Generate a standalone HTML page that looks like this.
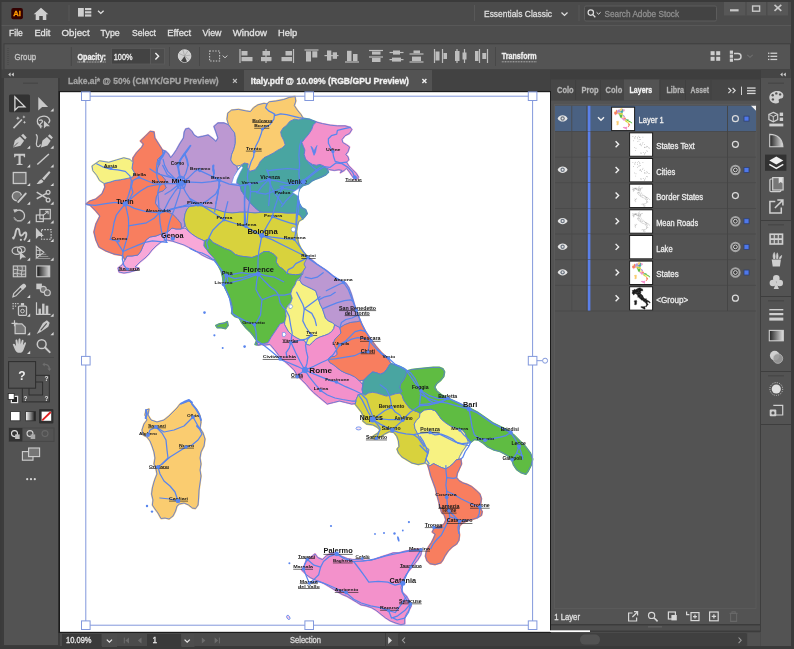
<!DOCTYPE html>
<html><head><meta charset="utf-8"><title>Adobe Illustrator - Italy.pdf</title>
<style>
*{box-sizing:border-box;margin:0;padding:0}
html,body{width:794px;height:649px;overflow:hidden;background:#535353}
#app{position:relative;width:794px;height:649px;overflow:hidden}
svg{position:absolute;left:0;top:0;display:block}
text{font-family:"Liberation Sans",sans-serif;white-space:pre}
</style></head>
<body><div id="app">
<svg id="screen" width="794" height="649" viewBox="0 0 794 649">
<defs><filter id="soft" x="0" y="0" width="794" height="649" filterUnits="userSpaceOnUse"><feGaussianBlur stdDeviation="0.6"/></filter></defs>
<g id="chrome">
<rect x="0" y="0" width="794" height="649" fill="#535353"/>
<rect x="0" y="0" width="794" height="25" fill="#4b4b4b"/>
<rect x="0" y="25" width="794" height="1" fill="#585858"/>
<rect x="0" y="26" width="794" height="18" fill="#4d4d4d"/>
<rect x="0" y="0" width="794" height="2" fill="#3a3a3a"/>
<rect x="0" y="43" width="794" height="27" fill="#4d4d4d"/>
<rect x="3.5" y="43.3" width="787.5" height="26.4" fill="#3e3e3e"/>
<rect x="4.5" y="44.3" width="785.5" height="25" fill="#545454"/>
<rect x="0" y="69.5" width="794" height="8.5" fill="#424242"/>
<rect x="0" y="78" width="60" height="571" fill="#3c3c3c"/>
<rect x="4" y="78" width="54" height="567" fill="#535353"/>
<rect x="60" y="70" width="490" height="22" fill="#424242"/>
<rect x="244" y="70" width="188" height="21.5" fill="#535353"/>
<rect x="550" y="70" width="244" height="579" fill="#3e3e3e"/>
<rect x="551" y="79.5" width="209" height="21" fill="#464646"/>
<rect x="624" y="79.5" width="35.5" height="21" fill="#535353"/>
<rect x="551" y="100.5" width="209" height="524" fill="#535353"/>
<rect x="761" y="78" width="30" height="571" fill="#535353"/>
<rect x="761" y="69.5" width="30" height="8.5" fill="#454545"/>
<rect x="60" y="632" width="701" height="17" fill="#4b4b4b"/>
<rect x="551" y="624" width="209" height="8" fill="#3c3c3c"/>
<rect x="551" y="625.5" width="209" height="5" fill="#4e4e4e"/>
<rect x="0" y="0" width="1.5" height="649" fill="#3a3a3a"/>
<rect x="791" y="0" width="3" height="649" fill="#3a3a3a"/>
<rect x="0" y="646" width="794" height="3" fill="#3a3a3a"/>
<rect x="58.6" y="91" width="492.4" height="542" fill="#1c1c1c"/>
<rect x="60" y="92.2" width="490" height="539.6" fill="#ffffff"/>
<rect x="550" y="630.3" width="40" height="1.7" fill="#ffffff"/>
</g>
<g id="artwork" filter="url(#soft)">
<g id="under" stroke-width="1.8" stroke-linejoin="round">
<polygon fill="#BC98D2" stroke="#BC98D2" points="162.4,150 165.4,151 168.4,154 170.7,157.8 173.7,154 176.7,149.5 179.7,144 183.5,138 184.3,132 185.8,129 188.8,128.3 191.8,131.3 194,135 197.9,137.4 202,136.5 208,135 212,138 216,141.5 218,138 216,132 214,126.5 218,123 224,123 229,125 231.6,129 234.6,132.8 235.3,137.3 235.3,143.4 233.8,149.4 231.6,154.7 230.8,160 233.1,163.8 236.8,166 237.6,170.6 235,176 236.1,182 239.9,185 241.4,191 245.9,197.1 250.5,203.1 255,207.7 259.5,211.4 262.5,212.2 255,213 247.4,212.2 239.9,212.2 232.3,213 224.8,212.2 217.2,209.9 209.6,207.7 203.6,206.2 196,205.4 190,206.2 187,209 185,214 184,220 185,226 181,229 181.6,227.8 180.8,223.2 177,218.6 172.4,214 168.5,212.4 163.1,210.9 158.5,207.8 155.4,203.2 156.2,197 158.5,192.4 163.1,190.8 166.2,187.8 164.7,184.7 165.4,180 161.6,175.4 157,172.4 157.7,167.7 160,163 160,157 163,154"/>
<polygon fill="#D8D23E" stroke="#D8D23E" points="190,206.2 196,205.4 203.6,206.2 209.6,207.7 217.2,209.9 224.8,212.2 232.3,213 239.9,212.2 247.4,212.2 255,213 262.5,212.2 270.1,212.2 277.7,212.2 286.7,213 295.8,213 300.3,215.2 302.6,219 298.8,221.3 297.3,225.8 296.5,231.8 297.3,237.9 298.8,243.9 301,248.5 304.1,253 307.9,256.8 310.5,259.5 308.5,262 305.6,267.4 303.3,271.1 300.3,274.2 295.8,274.9 289.7,274.2 286.7,272.7 283.7,269.6 279.2,266.6 276.1,262.1 276.9,257.5 273.1,253.8 268.6,251.5 264,251.5 258,255.3 252,257.5 245.9,256.8 239.9,256 235.3,254.5 230.8,250.7 224.8,248.5 218.7,245.4 212.7,242.4 209.6,238.6 204.4,240.9 197.6,237.9 193,234.9 189,231.8 185.5,226 184.2,220 185,214 187,209"/>
<polygon fill="#48A5A1" stroke="#48A5A1" points="303.3,118.4 310,119.5 316.3,122.1 313.2,125.1 311.7,129.6 308.7,134.2 304.9,138.7 301.9,142.5 303.4,146.3 304.9,150 304.2,154.6 305.7,159.1 308.7,162.1 312.5,164.4 316.3,165.2 320,164.4 323.8,165.9 326.8,168.2 328.4,172 325.3,175 320.8,177.2 316.3,178.8 311.7,181 308,184 302.7,185.6 299.6,188.6 298,192.6 298,198.6 298.8,203.1 301.8,207.7 305.6,209.9 307.1,213.7 304.5,217 302.6,219 300.3,215.2 295.8,213 286.7,213 277.7,212.2 270.1,212.2 262.5,212.2 259.5,211.4 255,207.7 250.5,203.1 245.9,197.1 241.4,191 239.9,185 236.1,182 235,176 237.6,170.6 241.4,166 244.4,163 248.2,163.8 247.4,167.5 249.7,171.3 255,169.8 262,158 272,150 277,138 276,128 286,120 294.3,117"/>
<polygon fill="#FACC70" stroke="#FACC70" points="227.8,113.1 231.6,110.1 238.4,109.4 245.9,110.9 250.5,111.6 253.5,107.8 258,104.8 264,103.3 267,104 269.3,101.8 276.1,101 283.7,99.5 289.7,97.3 295,96.5 295.8,101 294.3,105.6 297.3,110.1 301,114.6 303.3,118.4 298.8,119.9 294.3,119.2 289.7,121.4 286.7,125.2 282.9,128.2 280.7,132 281.4,135.8 283.7,140.3 285.2,144.9 282.2,147.9 277.7,150.2 273.1,153.2 268.6,155.5 264,157.7 260.3,161.5 258,166 255,169.8 249.7,171.3 247.4,167.5 248.2,163.8 244.4,163 240.6,165.3 236.8,166 233.1,163.8 230.8,160 231.6,154.7 233.8,149.4 235.3,143.4 235.3,137.3 234.6,132.8 231.6,129 228.5,124.5 227,119.2"/>
<polygon fill="#F391CB" stroke="#F391CB" points="316.3,122.1 322.3,123.6 329.9,125.1 337.4,125.9 345,125.9 350.3,127.4 351.8,129.6 349.5,133.4 345,135.7 342,139.5 342.7,142.5 346.5,144.8 349.5,147 348,151.6 345.7,154.6 348,156.8 348.8,159.9 346.5,162.1 348.8,165.9 352.5,169.7 356.3,173.5 358.6,177.2 355.6,179.5 352.5,176.5 349.5,172 346.5,168.2 344.2,170.4 340.4,172.7 342,170.4 338.9,169.7 334.4,170.4 329.9,169.7 326.8,168.2 323.8,165.9 320,164.4 316.3,165.2 312.5,164.4 308.7,162.1 305.7,159.1 304.2,154.6 304.9,150 303.4,146.3 301.9,142.5 304.9,138.7 308.7,134.2 311.7,129.6 313.2,125.1"/>
<polygon fill="#F8A8D8" stroke="#F8A8D8" points="125,260 122,265 118,268 119,272 124,273 130,272 137,270 139,268 135,267 140,262 145,258 149,254 152,250 156,246 161,242 167,240 172,241 178,243 184,245 190,248 196,251 202,255 208,258 213,260 215,258 210,254 207,250 204,246 204.4,240.9 197.6,237.9 193,234.9 189,231.8 185,228 181,229 176,229 172,228 169,231 164,233 161,234 156,236 150,237 146,240 143,246 141,251 138,255 132,256 127,256"/>
<polygon fill="#F87E5E" stroke="#F87E5E" points="132.9,162.3 133,158 136.7,152.5 142,147 143.5,144 140.5,141 145,136.6 150.3,131.3 154,132 154.8,138 158.6,144 162.4,150 163,154 160,157 157,160 160,163 157.7,167.7 157,172.4 161.6,175.4 165.4,180 164.7,184.7 166.2,187.8 163.1,190.8 158.5,192.4 156.2,197 155.4,203.2 158.5,207.8 163.1,210.9 168.5,212.4 172.4,214 177,218.6 180.8,223.2 181.6,227.8 181,229 176,229 172,228 169,231 164,233 161,234 156,236 150,237 146,240 143,246 141,251 138,255 132,256 127,256 125,260 123,256 120,255 114,254 106,251 99,247 96,240 94,232 96,224 100,216 95,210 90,205 86,204 90,201 96,199 102,194 105,187 104.2,183.5 110.2,182 114.8,180.5 120.8,179.7 128.4,178.2 132.9,176.7 134.4,172.9 132,168.4"/>
<polygon fill="#F7F282" stroke="#F7F282" points="92,166 99.6,160.8 108.7,162.3 116.3,160 123.8,157.8 129.9,159.3 132.9,162.3 132,168.4 134.4,172.9 132.9,176.7 128.4,178.2 120.8,179.7 114.8,180.5 110.2,182 104.2,183.5 99.6,180.5 96.6,175.2 92.8,170.6"/>
<polygon fill="#5EBC42" stroke="#5EBC42" points="204.4,240.9 209.6,238.6 212.7,242.4 218.7,245.4 224.8,248.5 230.8,250.7 235.3,254.5 239.9,256 245.9,256.8 252,257.5 258,255.3 264,251.5 268.6,251.5 273.1,253.8 276.9,257.5 276.1,262.1 279.2,266.6 283.7,269.6 286.7,272.7 289.7,274.2 295.8,274.9 300.3,274.2 302.8,274.1 299.7,277.1 296.7,280.1 295.2,284.6 292.2,289.2 290.7,293.7 292.2,298.2 290.7,302.8 287.7,305.8 285.4,310.3 286.1,316.4 284.6,322.4 280.1,323.9 277.1,328.5 274,333 271,337.5 268,342.8 263.5,343.6 258.2,345.1 255.2,344.3 256.7,340.6 253.6,336 249.9,331.5 245.3,327 241.6,322.4 239.3,317.9 234.8,316.4 231.7,313.4 232.5,307.3 231,301.3 228.7,295.2 225.7,289.2 223.4,283.1 222.7,277.1 221.2,271 218.1,265 215,259.5 210,254 207,250 204,246"/>
<polygon fill="#F7F282" stroke="#F7F282" points="299.8,280.2 302.1,284 306.6,286.3 311.2,288.5 315.7,290.8 317.2,295.3 318.7,299.9 320.2,304.4 322.5,308.9 324,313.5 325.5,318 328.5,321 332.3,322.5 334.6,324.8 333.8,328.6 331.6,331.6 328.5,333.9 324.8,335.4 320.2,336.9 315.7,339.2 312.7,342.2 309.6,345.2 306.6,344.5 304.4,340.7 300.6,339.9 296,337.6 291.5,334.6 288,331 284.6,324.7 284.6,322.4 286.1,316.4 285.4,310.3 287.7,305.8 290.7,302.8 292.2,298.2 290.7,293.7 292.2,289.2 295.2,284.6 296.7,280.1"/>
<polygon fill="#BC98D2" stroke="#BC98D2" points="308.1,257.6 312.7,260.6 317.2,264.4 321.7,267.4 326.3,270.4 330.8,274.2 335.3,278 341.4,281 345.9,283.2 348.9,287.8 351.2,293.8 353.5,301.4 355.7,308.9 358,315 360.3,321 356.5,321.8 350.5,322.5 344.4,324.8 339.9,327.8 334.6,324.8 332.3,322.5 328.5,321 325.5,318 324,313.5 322.5,308.9 320.2,304.4 318.7,299.9 317.2,295.3 315.7,290.8 311.2,288.5 306.6,286.3 302.1,284 299.8,280.2 301.3,275.7 302.8,274.1 303.3,271.1 305.6,267.4 304,264 306,260"/>
<polygon fill="#F391CB" stroke="#F391CB" points="256.7,341.5 258.2,345.1 263.5,343.6 268,342.8 271,337.5 274,333 277.1,328.5 280.1,323.9 284.6,322.4 284.6,324.7 288,331 291.5,334.6 296,337.6 300.6,339.9 304.4,340.7 306.6,344.5 309.6,345.2 312.7,342.2 315.7,339.2 320.2,336.9 324.8,335.4 328.5,333.9 331.6,331.6 333.8,328.6 334.6,324.8 339.9,327.8 341,333 338,336 335,339.1 333.5,342.8 335,346.6 336.5,349.6 337.2,354.2 335,356.4 330.4,356.7 328.2,359.5 329.7,362.5 333.5,364.8 337.2,367.8 341,370.8 345.6,373.1 350.1,374.6 354.6,376.8 359.2,380.6 362.8,384.8 362.1,389.3 362.8,393.8 358.3,394.6 356,399.9 355.3,403.5 351.6,404 345.6,402.5 339.5,401 333.5,402.5 327.4,404 322.9,400.3 318.4,396.5 313.8,392.7 310,388.9 306.3,384.4 301.7,379.9 297.2,375.3 294.2,370 289.6,365.5 284.4,361 279.1,355.7 274.5,349.6 270,344.4 263.5,345.1"/>
<polygon fill="#F87E5E" stroke="#F87E5E" points="360.3,321 362.5,325.6 365.2,331 369.7,338 375.8,346 381.8,353 387.9,358.7 390.8,363.6 389.3,365.1 387,368.9 384,372.7 380.2,374.2 376.4,372.7 372.7,371.9 369.6,374.2 366.6,377.2 363.6,380.2 359.2,380.6 354.6,376.8 350.1,374.6 345.6,373.1 341,370.8 337.2,367.8 333.5,364.8 329.7,362.5 328.2,359.5 330.4,356.7 335,356.4 337.2,354.2 336.5,349.6 335,346.6 333.5,342.8 335,339.1 338,336 341,333 339.9,327.8 344.4,324.8 350.5,322.5 356.5,321.8"/>
<polygon fill="#48A5A1" stroke="#48A5A1" points="390.8,363.6 395.3,365.1 399.9,366.6 404.4,368.9 406.7,371.2 405.9,375.7 403.6,380.2 400.6,384 399.9,387.8 402.1,391.6 399.9,393.1 395.3,393.8 390.8,395.3 386.3,396.1 381.7,394.6 377.2,393.1 372.7,392.3 368.1,393.1 365.1,395.3 362.8,393.8 362.1,389.3 362.8,384.8 363.6,380.2 366.6,377.2 369.6,374.2 372.7,371.9 376.4,372.7 380.2,374.2 384,372.7 387,368.9 389.3,365.1"/>
<polygon fill="#D8D23E" stroke="#D8D23E" points="358.3,394.6 362.8,393.8 365.1,395.3 368.1,393.1 372.7,392.3 377.2,393.1 381.7,394.6 386.3,396.1 390.8,395.3 395.3,393.8 399.9,393.1 402.1,395.3 403.6,399.9 406.7,404.4 409.7,408.2 413.5,410.4 418,412 420.3,413.5 419.5,417.3 416.5,420.3 414.2,424 415,428.6 417.3,433.1 419.5,437.7 422.5,442.2 425.6,446.7 429,449.5 428,454 426,459 425,463 418,464.5 412,463 407,460 402,457 398.5,453 397,449 399.1,446.7 398.4,440.7 396.8,436.1 393.8,432.4 389.3,431.6 384.8,433.9 380.2,436.9 375.7,439.2 371.2,437.7 374.2,435.4 378,433.1 380.2,430.1 377.2,427.1 372.7,424.8 366.6,424 362.8,421 363.6,416.5 361.3,412 358.3,408.2 355.3,404.4 356,399.9"/>
<polygon fill="#F7F282" stroke="#F7F282" points="420,413.2 424.5,409.9 430.6,409.2 435.1,410.7 438.1,414.5 441.2,419 445.7,422.8 450.2,425.8 456.3,428.1 462.3,429.6 465.3,433.4 466.8,437.9 468.2,442 465.5,447 462.3,451.5 459.5,456.5 458.5,459.4 456.3,459.8 453.2,463.6 449.5,466.6 445.7,468.9 441.2,467.4 436.6,465.1 433.6,463.6 429.8,465.9 427.6,464.4 425,463 426,459 428,454 429,449.5 425.6,446.7 422.5,442.2 419.5,437.7 417.3,433.1 415,428.6 414.2,424 416.5,420.3 419.5,417.3"/>
<polygon fill="#5EBC42" stroke="#5EBC42" points="406.7,371.2 412,369.6 418,368.9 425.6,368.1 433.1,367.4 439.2,367.4 442.9,368.9 444.5,371.9 443.7,376.4 440.7,380.2 436.9,383.2 434.6,387 436.6,391 441.2,394.8 447.2,397.8 454.8,401.6 462.3,405.4 469.9,408.4 477.4,412.2 485,417.5 492.5,422.8 500.1,426.6 507.7,430.3 513.7,434.9 519.7,440.9 525.8,447 530.3,453 532.6,459.1 531.1,465.1 528.1,471.1 525.8,474.2 521.3,472.7 516.7,469.6 513.7,465.1 512.2,460.6 509.2,456.8 504.6,453.8 500.1,451.5 494.1,450 488,447 483.5,443.2 478.9,440.2 474.4,439.4 470.6,442.4 466.8,437.9 465.3,433.4 462.3,429.6 456.3,428.1 450.2,425.8 445.7,422.8 441.2,419 438.1,414.5 435.1,410.7 430.6,409.2 424.5,409.9 420,413.2 418,412 413.5,410.4 409.7,408.2 406.7,404.4 403.6,399.9 402.1,395.3 399.9,393.1 402.1,391.6 399.9,387.8 400.6,384 403.6,380.2 405.9,375.7"/>
<polygon fill="#F87E5E" stroke="#F87E5E" points="427.6,464.4 429.8,465.9 433.6,463.6 436.6,465.1 441.2,467.4 445.7,468.9 449.5,466.6 453.2,463.6 456.3,459.8 460.8,459.1 461.5,464 458.8,470 457.3,473 456.5,477.6 458.8,480.6 462.5,482.8 467.1,484.4 471.6,486.6 476.1,490.4 479.9,494.2 481.4,498.7 480.7,503.2 479.9,507.8 482.2,511.6 481.4,515.3 477.7,517.6 473.1,519.1 467.1,520.6 462.5,522.9 459.5,525.9 458.8,530.5 459.5,535 458.8,540.3 456.5,544.1 452,547.1 448.2,550.9 445.2,555.4 442.9,559.9 440.6,562.9 435.3,564.5 430,563.7 427,560.7 425.5,556.1 426.3,551.6 428.5,547.1 431.6,542.5 433.8,538 435.3,534.2 432.3,532 433.8,528.9 436.8,527.4 441.4,525.9 444.4,523.6 445.9,519.9 444.4,515.3 441.4,511.6 439.9,506.3 438.4,500.2 436.8,494.2 435.3,488.1 433.1,482.1 430.8,476 429.3,470"/>
<polygon fill="#F391CB" stroke="#F391CB" points="301.7,570 304.6,565.2 306.5,559.6 310.2,557.7 315,553.9 317.8,557.7 322.5,559.6 326.3,555.8 330.1,553.9 334.8,552.9 338.6,554.8 342.3,556.7 347.1,558.6 352.7,559.6 359.4,559.6 365,560.5 370.7,560.5 376.4,558.6 382,556.7 387.7,554.8 393.4,552.9 399,552.9 405.6,551.1 412.3,550.1 417.9,549.2 421.7,550.1 420.8,554.8 417.9,559.6 414.1,564.3 410.4,569 406.6,573.7 403.8,578.5 401.9,583.2 400.9,587.9 402.8,592.6 406.6,596.4 409.4,601.1 411.3,605.8 409.4,609.6 406.6,613.4 404.7,618.1 404.7,623.8 400.9,624.7 395.2,622.8 390.5,621 385.8,618.1 381.1,614.4 376.4,610.6 371.6,607.7 366,605.8 361.2,604.9 356.5,602.1 351.8,599.2 347.1,596.4 342.3,594.5 337.6,591.7 332.9,588.8 328.2,586 323.5,583.2 318.7,581.3 314,579.4 310.2,577.5 306.5,574.7 303.6,571.8"/>
<polygon fill="#FACC70" stroke="#FACC70" points="180,404 184,403 189,401 193,405 197,410 200,416 201,422 200,428 203,433 205,439 204,446 201,452 200,458 201,464 200,470 201,476 200,483 199,490 198.6,498 198,505 195.5,508.5 192.4,508 188.6,505 184,503 179.4,504 177,506 175.5,511 173,516 169,519 165,518 161,518.5 158,513 155,509 152.4,505 153,500 151.6,494 152.4,488 154,482 155,479 157,474 156,469 154,464 155,458 154,452 152,446 150,441 147,437 143,435 142,430 144,424 147,420 145,415 146,410 149,409 148,415 151,420 157,422 164,420 169,416 173,412 177,408"/>
<polygon fill="#5EBC42" stroke="#5EBC42" points="215.9,325.5 219.6,323.9 224.2,323.2 227.2,321.7 228,325.5 225.7,328.5 221.2,327.7 217.4,327.7"/>
</g>
<g id="regions" stroke="#5C7CD4" stroke-width="0.9" stroke-linejoin="round">
<polygon fill="#BC98D2" points="162.4,150 165.4,151 168.4,154 170.7,157.8 173.7,154 176.7,149.5 179.7,144 183.5,138 184.3,132 185.8,129 188.8,128.3 191.8,131.3 194,135 197.9,137.4 202,136.5 208,135 212,138 216,141.5 218,138 216,132 214,126.5 218,123 224,123 229,125 231.6,129 234.6,132.8 235.3,137.3 235.3,143.4 233.8,149.4 231.6,154.7 230.8,160 233.1,163.8 236.8,166 237.6,170.6 235,176 236.1,182 239.9,185 241.4,191 245.9,197.1 250.5,203.1 255,207.7 259.5,211.4 262.5,212.2 255,213 247.4,212.2 239.9,212.2 232.3,213 224.8,212.2 217.2,209.9 209.6,207.7 203.6,206.2 196,205.4 190,206.2 187,209 185,214 184,220 185,226 181,229 181.6,227.8 180.8,223.2 177,218.6 172.4,214 168.5,212.4 163.1,210.9 158.5,207.8 155.4,203.2 156.2,197 158.5,192.4 163.1,190.8 166.2,187.8 164.7,184.7 165.4,180 161.6,175.4 157,172.4 157.7,167.7 160,163 160,157 163,154"/>
<polygon fill="#D8D23E" points="190,206.2 196,205.4 203.6,206.2 209.6,207.7 217.2,209.9 224.8,212.2 232.3,213 239.9,212.2 247.4,212.2 255,213 262.5,212.2 270.1,212.2 277.7,212.2 286.7,213 295.8,213 300.3,215.2 302.6,219 298.8,221.3 297.3,225.8 296.5,231.8 297.3,237.9 298.8,243.9 301,248.5 304.1,253 307.9,256.8 310.5,259.5 308.5,262 305.6,267.4 303.3,271.1 300.3,274.2 295.8,274.9 289.7,274.2 286.7,272.7 283.7,269.6 279.2,266.6 276.1,262.1 276.9,257.5 273.1,253.8 268.6,251.5 264,251.5 258,255.3 252,257.5 245.9,256.8 239.9,256 235.3,254.5 230.8,250.7 224.8,248.5 218.7,245.4 212.7,242.4 209.6,238.6 204.4,240.9 197.6,237.9 193,234.9 189,231.8 185.5,226 184.2,220 185,214 187,209"/>
<polygon fill="#48A5A1" points="303.3,118.4 310,119.5 316.3,122.1 313.2,125.1 311.7,129.6 308.7,134.2 304.9,138.7 301.9,142.5 303.4,146.3 304.9,150 304.2,154.6 305.7,159.1 308.7,162.1 312.5,164.4 316.3,165.2 320,164.4 323.8,165.9 326.8,168.2 328.4,172 325.3,175 320.8,177.2 316.3,178.8 311.7,181 308,184 302.7,185.6 299.6,188.6 298,192.6 298,198.6 298.8,203.1 301.8,207.7 305.6,209.9 307.1,213.7 304.5,217 302.6,219 300.3,215.2 295.8,213 286.7,213 277.7,212.2 270.1,212.2 262.5,212.2 259.5,211.4 255,207.7 250.5,203.1 245.9,197.1 241.4,191 239.9,185 236.1,182 235,176 237.6,170.6 241.4,166 244.4,163 248.2,163.8 247.4,167.5 249.7,171.3 255,169.8 262,158 272,150 277,138 276,128 286,120 294.3,117"/>
<polygon fill="#FACC70" points="227.8,113.1 231.6,110.1 238.4,109.4 245.9,110.9 250.5,111.6 253.5,107.8 258,104.8 264,103.3 267,104 269.3,101.8 276.1,101 283.7,99.5 289.7,97.3 295,96.5 295.8,101 294.3,105.6 297.3,110.1 301,114.6 303.3,118.4 298.8,119.9 294.3,119.2 289.7,121.4 286.7,125.2 282.9,128.2 280.7,132 281.4,135.8 283.7,140.3 285.2,144.9 282.2,147.9 277.7,150.2 273.1,153.2 268.6,155.5 264,157.7 260.3,161.5 258,166 255,169.8 249.7,171.3 247.4,167.5 248.2,163.8 244.4,163 240.6,165.3 236.8,166 233.1,163.8 230.8,160 231.6,154.7 233.8,149.4 235.3,143.4 235.3,137.3 234.6,132.8 231.6,129 228.5,124.5 227,119.2"/>
<polygon fill="#F391CB" points="316.3,122.1 322.3,123.6 329.9,125.1 337.4,125.9 345,125.9 350.3,127.4 351.8,129.6 349.5,133.4 345,135.7 342,139.5 342.7,142.5 346.5,144.8 349.5,147 348,151.6 345.7,154.6 348,156.8 348.8,159.9 346.5,162.1 348.8,165.9 352.5,169.7 356.3,173.5 358.6,177.2 355.6,179.5 352.5,176.5 349.5,172 346.5,168.2 344.2,170.4 340.4,172.7 342,170.4 338.9,169.7 334.4,170.4 329.9,169.7 326.8,168.2 323.8,165.9 320,164.4 316.3,165.2 312.5,164.4 308.7,162.1 305.7,159.1 304.2,154.6 304.9,150 303.4,146.3 301.9,142.5 304.9,138.7 308.7,134.2 311.7,129.6 313.2,125.1"/>
<polygon fill="#F8A8D8" points="125,260 122,265 118,268 119,272 124,273 130,272 137,270 139,268 135,267 140,262 145,258 149,254 152,250 156,246 161,242 167,240 172,241 178,243 184,245 190,248 196,251 202,255 208,258 213,260 215,258 210,254 207,250 204,246 204.4,240.9 197.6,237.9 193,234.9 189,231.8 185,228 181,229 176,229 172,228 169,231 164,233 161,234 156,236 150,237 146,240 143,246 141,251 138,255 132,256 127,256"/>
<polygon fill="#F87E5E" points="132.9,162.3 133,158 136.7,152.5 142,147 143.5,144 140.5,141 145,136.6 150.3,131.3 154,132 154.8,138 158.6,144 162.4,150 163,154 160,157 157,160 160,163 157.7,167.7 157,172.4 161.6,175.4 165.4,180 164.7,184.7 166.2,187.8 163.1,190.8 158.5,192.4 156.2,197 155.4,203.2 158.5,207.8 163.1,210.9 168.5,212.4 172.4,214 177,218.6 180.8,223.2 181.6,227.8 181,229 176,229 172,228 169,231 164,233 161,234 156,236 150,237 146,240 143,246 141,251 138,255 132,256 127,256 125,260 123,256 120,255 114,254 106,251 99,247 96,240 94,232 96,224 100,216 95,210 90,205 86,204 90,201 96,199 102,194 105,187 104.2,183.5 110.2,182 114.8,180.5 120.8,179.7 128.4,178.2 132.9,176.7 134.4,172.9 132,168.4"/>
<polygon fill="#F7F282" points="92,166 99.6,160.8 108.7,162.3 116.3,160 123.8,157.8 129.9,159.3 132.9,162.3 132,168.4 134.4,172.9 132.9,176.7 128.4,178.2 120.8,179.7 114.8,180.5 110.2,182 104.2,183.5 99.6,180.5 96.6,175.2 92.8,170.6"/>
<polygon fill="#5EBC42" points="204.4,240.9 209.6,238.6 212.7,242.4 218.7,245.4 224.8,248.5 230.8,250.7 235.3,254.5 239.9,256 245.9,256.8 252,257.5 258,255.3 264,251.5 268.6,251.5 273.1,253.8 276.9,257.5 276.1,262.1 279.2,266.6 283.7,269.6 286.7,272.7 289.7,274.2 295.8,274.9 300.3,274.2 302.8,274.1 299.7,277.1 296.7,280.1 295.2,284.6 292.2,289.2 290.7,293.7 292.2,298.2 290.7,302.8 287.7,305.8 285.4,310.3 286.1,316.4 284.6,322.4 280.1,323.9 277.1,328.5 274,333 271,337.5 268,342.8 263.5,343.6 258.2,345.1 255.2,344.3 256.7,340.6 253.6,336 249.9,331.5 245.3,327 241.6,322.4 239.3,317.9 234.8,316.4 231.7,313.4 232.5,307.3 231,301.3 228.7,295.2 225.7,289.2 223.4,283.1 222.7,277.1 221.2,271 218.1,265 215,259.5 210,254 207,250 204,246"/>
<polygon fill="#F7F282" points="299.8,280.2 302.1,284 306.6,286.3 311.2,288.5 315.7,290.8 317.2,295.3 318.7,299.9 320.2,304.4 322.5,308.9 324,313.5 325.5,318 328.5,321 332.3,322.5 334.6,324.8 333.8,328.6 331.6,331.6 328.5,333.9 324.8,335.4 320.2,336.9 315.7,339.2 312.7,342.2 309.6,345.2 306.6,344.5 304.4,340.7 300.6,339.9 296,337.6 291.5,334.6 288,331 284.6,324.7 284.6,322.4 286.1,316.4 285.4,310.3 287.7,305.8 290.7,302.8 292.2,298.2 290.7,293.7 292.2,289.2 295.2,284.6 296.7,280.1"/>
<polygon fill="#BC98D2" points="308.1,257.6 312.7,260.6 317.2,264.4 321.7,267.4 326.3,270.4 330.8,274.2 335.3,278 341.4,281 345.9,283.2 348.9,287.8 351.2,293.8 353.5,301.4 355.7,308.9 358,315 360.3,321 356.5,321.8 350.5,322.5 344.4,324.8 339.9,327.8 334.6,324.8 332.3,322.5 328.5,321 325.5,318 324,313.5 322.5,308.9 320.2,304.4 318.7,299.9 317.2,295.3 315.7,290.8 311.2,288.5 306.6,286.3 302.1,284 299.8,280.2 301.3,275.7 302.8,274.1 303.3,271.1 305.6,267.4 304,264 306,260"/>
<polygon fill="#F391CB" points="256.7,341.5 258.2,345.1 263.5,343.6 268,342.8 271,337.5 274,333 277.1,328.5 280.1,323.9 284.6,322.4 284.6,324.7 288,331 291.5,334.6 296,337.6 300.6,339.9 304.4,340.7 306.6,344.5 309.6,345.2 312.7,342.2 315.7,339.2 320.2,336.9 324.8,335.4 328.5,333.9 331.6,331.6 333.8,328.6 334.6,324.8 339.9,327.8 341,333 338,336 335,339.1 333.5,342.8 335,346.6 336.5,349.6 337.2,354.2 335,356.4 330.4,356.7 328.2,359.5 329.7,362.5 333.5,364.8 337.2,367.8 341,370.8 345.6,373.1 350.1,374.6 354.6,376.8 359.2,380.6 362.8,384.8 362.1,389.3 362.8,393.8 358.3,394.6 356,399.9 355.3,403.5 351.6,404 345.6,402.5 339.5,401 333.5,402.5 327.4,404 322.9,400.3 318.4,396.5 313.8,392.7 310,388.9 306.3,384.4 301.7,379.9 297.2,375.3 294.2,370 289.6,365.5 284.4,361 279.1,355.7 274.5,349.6 270,344.4 263.5,345.1"/>
<polygon fill="#F87E5E" points="360.3,321 362.5,325.6 365.2,331 369.7,338 375.8,346 381.8,353 387.9,358.7 390.8,363.6 389.3,365.1 387,368.9 384,372.7 380.2,374.2 376.4,372.7 372.7,371.9 369.6,374.2 366.6,377.2 363.6,380.2 359.2,380.6 354.6,376.8 350.1,374.6 345.6,373.1 341,370.8 337.2,367.8 333.5,364.8 329.7,362.5 328.2,359.5 330.4,356.7 335,356.4 337.2,354.2 336.5,349.6 335,346.6 333.5,342.8 335,339.1 338,336 341,333 339.9,327.8 344.4,324.8 350.5,322.5 356.5,321.8"/>
<polygon fill="#48A5A1" points="390.8,363.6 395.3,365.1 399.9,366.6 404.4,368.9 406.7,371.2 405.9,375.7 403.6,380.2 400.6,384 399.9,387.8 402.1,391.6 399.9,393.1 395.3,393.8 390.8,395.3 386.3,396.1 381.7,394.6 377.2,393.1 372.7,392.3 368.1,393.1 365.1,395.3 362.8,393.8 362.1,389.3 362.8,384.8 363.6,380.2 366.6,377.2 369.6,374.2 372.7,371.9 376.4,372.7 380.2,374.2 384,372.7 387,368.9 389.3,365.1"/>
<polygon fill="#D8D23E" points="358.3,394.6 362.8,393.8 365.1,395.3 368.1,393.1 372.7,392.3 377.2,393.1 381.7,394.6 386.3,396.1 390.8,395.3 395.3,393.8 399.9,393.1 402.1,395.3 403.6,399.9 406.7,404.4 409.7,408.2 413.5,410.4 418,412 420.3,413.5 419.5,417.3 416.5,420.3 414.2,424 415,428.6 417.3,433.1 419.5,437.7 422.5,442.2 425.6,446.7 429,449.5 428,454 426,459 425,463 418,464.5 412,463 407,460 402,457 398.5,453 397,449 399.1,446.7 398.4,440.7 396.8,436.1 393.8,432.4 389.3,431.6 384.8,433.9 380.2,436.9 375.7,439.2 371.2,437.7 374.2,435.4 378,433.1 380.2,430.1 377.2,427.1 372.7,424.8 366.6,424 362.8,421 363.6,416.5 361.3,412 358.3,408.2 355.3,404.4 356,399.9"/>
<polygon fill="#F7F282" points="420,413.2 424.5,409.9 430.6,409.2 435.1,410.7 438.1,414.5 441.2,419 445.7,422.8 450.2,425.8 456.3,428.1 462.3,429.6 465.3,433.4 466.8,437.9 468.2,442 465.5,447 462.3,451.5 459.5,456.5 458.5,459.4 456.3,459.8 453.2,463.6 449.5,466.6 445.7,468.9 441.2,467.4 436.6,465.1 433.6,463.6 429.8,465.9 427.6,464.4 425,463 426,459 428,454 429,449.5 425.6,446.7 422.5,442.2 419.5,437.7 417.3,433.1 415,428.6 414.2,424 416.5,420.3 419.5,417.3"/>
<polygon fill="#5EBC42" points="406.7,371.2 412,369.6 418,368.9 425.6,368.1 433.1,367.4 439.2,367.4 442.9,368.9 444.5,371.9 443.7,376.4 440.7,380.2 436.9,383.2 434.6,387 436.6,391 441.2,394.8 447.2,397.8 454.8,401.6 462.3,405.4 469.9,408.4 477.4,412.2 485,417.5 492.5,422.8 500.1,426.6 507.7,430.3 513.7,434.9 519.7,440.9 525.8,447 530.3,453 532.6,459.1 531.1,465.1 528.1,471.1 525.8,474.2 521.3,472.7 516.7,469.6 513.7,465.1 512.2,460.6 509.2,456.8 504.6,453.8 500.1,451.5 494.1,450 488,447 483.5,443.2 478.9,440.2 474.4,439.4 470.6,442.4 466.8,437.9 465.3,433.4 462.3,429.6 456.3,428.1 450.2,425.8 445.7,422.8 441.2,419 438.1,414.5 435.1,410.7 430.6,409.2 424.5,409.9 420,413.2 418,412 413.5,410.4 409.7,408.2 406.7,404.4 403.6,399.9 402.1,395.3 399.9,393.1 402.1,391.6 399.9,387.8 400.6,384 403.6,380.2 405.9,375.7"/>
<polygon fill="#F87E5E" points="427.6,464.4 429.8,465.9 433.6,463.6 436.6,465.1 441.2,467.4 445.7,468.9 449.5,466.6 453.2,463.6 456.3,459.8 460.8,459.1 461.5,464 458.8,470 457.3,473 456.5,477.6 458.8,480.6 462.5,482.8 467.1,484.4 471.6,486.6 476.1,490.4 479.9,494.2 481.4,498.7 480.7,503.2 479.9,507.8 482.2,511.6 481.4,515.3 477.7,517.6 473.1,519.1 467.1,520.6 462.5,522.9 459.5,525.9 458.8,530.5 459.5,535 458.8,540.3 456.5,544.1 452,547.1 448.2,550.9 445.2,555.4 442.9,559.9 440.6,562.9 435.3,564.5 430,563.7 427,560.7 425.5,556.1 426.3,551.6 428.5,547.1 431.6,542.5 433.8,538 435.3,534.2 432.3,532 433.8,528.9 436.8,527.4 441.4,525.9 444.4,523.6 445.9,519.9 444.4,515.3 441.4,511.6 439.9,506.3 438.4,500.2 436.8,494.2 435.3,488.1 433.1,482.1 430.8,476 429.3,470"/>
<polygon fill="#F391CB" points="301.7,570 304.6,565.2 306.5,559.6 310.2,557.7 315,553.9 317.8,557.7 322.5,559.6 326.3,555.8 330.1,553.9 334.8,552.9 338.6,554.8 342.3,556.7 347.1,558.6 352.7,559.6 359.4,559.6 365,560.5 370.7,560.5 376.4,558.6 382,556.7 387.7,554.8 393.4,552.9 399,552.9 405.6,551.1 412.3,550.1 417.9,549.2 421.7,550.1 420.8,554.8 417.9,559.6 414.1,564.3 410.4,569 406.6,573.7 403.8,578.5 401.9,583.2 400.9,587.9 402.8,592.6 406.6,596.4 409.4,601.1 411.3,605.8 409.4,609.6 406.6,613.4 404.7,618.1 404.7,623.8 400.9,624.7 395.2,622.8 390.5,621 385.8,618.1 381.1,614.4 376.4,610.6 371.6,607.7 366,605.8 361.2,604.9 356.5,602.1 351.8,599.2 347.1,596.4 342.3,594.5 337.6,591.7 332.9,588.8 328.2,586 323.5,583.2 318.7,581.3 314,579.4 310.2,577.5 306.5,574.7 303.6,571.8"/>
<polygon fill="#FACC70" points="180,404 184,403 189,401 193,405 197,410 200,416 201,422 200,428 203,433 205,439 204,446 201,452 200,458 201,464 200,470 201,476 200,483 199,490 198.6,498 198,505 195.5,508.5 192.4,508 188.6,505 184,503 179.4,504 177,506 175.5,511 173,516 169,519 165,518 161,518.5 158,513 155,509 152.4,505 153,500 151.6,494 152.4,488 154,482 155,479 157,474 156,469 154,464 155,458 154,452 152,446 150,441 147,437 143,435 142,430 144,424 147,420 145,415 146,410 149,409 148,415 151,420 157,422 164,420 169,416 173,412 177,408"/>
<polygon fill="#5EBC42" points="215.9,325.5 219.6,323.9 224.2,323.2 227.2,321.7 228,325.5 225.7,328.5 221.2,327.7 217.4,327.7"/>
</g>
<g id="lakes" fill="#fff" stroke="#5885EE" stroke-width="0.6">
<polygon points="231.6,183.5 233.8,176.6 237.6,170.6 241.4,166.0 242.9,167.5 239.6,173.6 237.0,179.6 236.3,184.0"/>
<polygon points="292.0,227.5 294.5,227.0 295.6,229.5 294.5,232.0 292.0,231.6 291.2,229.6"/>
<polygon points="289.0,305.0 291.6,304.6 292.6,306.6 291.2,308.6 289.0,308.2"/>
<polygon points="282.4,332.6 285.0,332.4 286.0,334.6 284.6,336.6 282.4,336.2"/>
</g>
<g id="roads" fill="none" stroke="#5885EE" stroke-width="1.25" stroke-linejoin="round" stroke-linecap="round">
<polyline points="125.3,203.9 114.8,202.4 104.2,203.9 95.1,205.4 86.8,204.6"/>
<polyline points="125.3,203.9 129.9,198.6 132.9,192.5 131.4,186.5 132.9,180.5 138.9,177.4"/>
<polyline points="125.3,203.9 132.9,197.1 140.5,191.0 148.0,186.5 160.1,184.2 170.7,183.5 181.3,183.5"/>
<polyline points="125.3,203.9 134.4,208.4 145.0,211.4 159.3,212.9"/>
<polyline points="125.3,203.9 126.8,210.7 128.4,217.9 128.7,225.8 128.1,234.9 125.3,243.9 123.1,251.5"/>
<polyline points="125.3,203.9 120.8,209.2 116.3,215.2 114.0,222.8 112.5,231.8 110.2,239.4"/>
<polyline points="138.9,177.4 146.5,180.5 154.1,183.5 160.1,184.2"/>
<polyline points="160.1,184.2 157.1,177.4 156.3,169.9 157.1,162.3 161.6,156.3 164.6,151.7"/>
<polyline points="160.1,184.2 157.8,192.5 158.6,201.6 159.3,212.9"/>
<polyline points="181.3,183.5 179.7,174.4 178.2,165.3 180.5,159.3 184.3,154.8 188.8,148.7"/>
<polyline points="181.3,183.5 188.8,177.4 194.9,171.4 200.0,168.4"/>
<polyline points="181.3,183.5 179.7,192.5 176.7,201.6 173.7,210.7 170.7,217.9 168.4,225.8 166.9,234.9 166.1,240.9"/>
<polyline points="181.3,183.5 185.8,192.5 191.8,201.6 197.9,206.1"/>
<polyline points="181.3,183.5 175.2,191.0 169.2,200.1 164.6,209.2 159.3,212.9"/>
<polyline points="181.3,183.5 173.7,177.4 167.7,171.4 164.6,165.3 163.1,159.3"/>
<polyline points="159.3,212.9 170.7,209.2 182.8,206.1 193.3,203.1 200.0,204.6"/>
<polyline points="96.6,163.8 102.7,166.8 110.2,169.1 117.8,169.9 125.3,171.4 129.9,175.9 131.4,180.5 130.6,188.0 128.4,195.6 125.3,203.9"/>
<polyline points="159.3,212.9 160.1,222.8 161.6,231.8 164.6,239.4 166.9,242.4"/>
<polyline points="128.4,225.8 137.4,224.3 146.5,222.8 154.1,218.2 159.3,212.9"/>
<polyline points="123.1,251.5 129.9,248.5 137.4,245.4 145.0,242.4 152.5,240.9 160.1,241.7 166.9,242.4"/>
<polyline points="110.2,239.4 116.3,240.9 123.1,251.5"/>
<polyline points="123.1,251.5 122.3,259.0 123.8,265.1 126.8,268.9"/>
<polyline points="176.7,180.5 178.2,177.4 184.3,178.2 185.8,183.5 184.3,188.0 178.2,188.0 176.7,183.5"/>
<polyline points="267.1,104.1 265.6,107.8 268.6,110.9 273.1,113.1 275.4,115.4 280.7,113.9 286.7,114.6 292.8,116.2 298.8,117.7 303.3,118.4"/>
<polyline points="274.6,113.9 273.9,119.2 270.1,124.5 262.5,129.0 261.0,134.3 258.8,140.3 255.7,146.4 254.2,151.7 253.5,157.0 251.2,161.5 249.7,166.0 248.2,170.6 247.4,176.6 248.2,184.2"/>
<polyline points="199.8,170.6 209.6,175.1 219.5,180.4 229.3,184.2 239.9,185.7 249.7,184.2 259.5,181.9 268.6,179.6 277.7,181.1 286.7,183.4 295.8,181.9 303.3,181.1"/>
<polyline points="212.7,166.0 214.2,170.6 213.4,176.6 219.5,180.4"/>
<polyline points="219.5,180.4 218.7,188.7 217.2,197.8 215.7,203.8"/>
<polyline points="249.7,184.2 250.5,191.7 249.7,200.8 248.2,209.9 247.4,218.9 246.7,226.5"/>
<polyline points="268.6,179.6 271.6,187.2 274.6,193.2 279.2,199.3 282.2,203.8"/>
<polyline points="268.6,179.6 262.5,185.7 258.0,191.7 250.5,191.7"/>
<polyline points="350.3,127.4 343.5,128.9 337.4,130.4 336.7,134.2 331.4,135.7 328.4,138.7 328.4,143.2 330.6,147.8 332.9,152.3 333.6,156.8 335.2,161.4 340.5,162.9 346.5,162.1"/>
<polyline points="303.4,181.8 310.2,176.5 317.8,170.5 323.8,166.7 329.9,167.4 335.9,162.9 342.0,163.6 348.0,167.4 352.5,172.0 354.8,177.3"/>
<polyline points="299.6,182.5 298.9,173.5 299.6,164.4 298.9,155.3 299.6,146.3 301.2,140.2"/>
<polyline points="303.4,181.8 295.1,184.1 286.0,185.6 280.0,186.3"/>
<polyline points="299.6,185.6 295.9,191.6 298.1,197.7 299.6,203.7 301.2,207.9"/>
<polyline points="303.4,181.8 298.1,188.6 292.1,194.6 286.0,200.7 281.5,206.7"/>
<polyline points="317.8,170.5 313.2,167.4 308.7,162.9"/>
<polyline points="190.0,198.6 200.6,204.6 212.7,212.2 224.0,219.8 235.3,223.5 245.9,226.6 253.5,231.1 261.8,235.6 271.6,239.4 283.7,245.5 295.8,251.5 307.9,257.5"/>
<polyline points="261.8,235.6 271.6,237.1 283.7,238.6 294.3,239.4"/>
<polyline points="261.8,235.6 267.1,225.8 272.4,216.7 274.6,207.7 277.7,198.6 282.2,188.0"/>
<polyline points="261.8,235.6 260.3,243.9 258.8,251.5 258.0,260.6 258.0,273.4"/>
<polyline points="245.9,226.6 245.2,215.2 244.4,203.1 244.4,194.1 245.9,185.0"/>
<polyline points="224.0,219.8 218.7,224.3 212.7,230.3 209.6,236.4 206.6,242.4 208.1,248.5"/>
<polyline points="224.0,219.8 224.8,213.7 226.3,207.7 227.8,201.6"/>
<polyline points="272.4,216.7 280.7,219.8 289.7,222.8 295.8,224.3"/>
<polyline points="294.3,239.4 295.8,231.8 296.5,224.3 297.3,216.7 298.8,209.2 298.1,200.1"/>
<polyline points="294.3,239.4 298.8,245.5 303.3,251.5 307.9,257.5"/>
<polyline points="200.6,204.6 208.1,200.1 215.7,194.1 220.2,185.0"/>
<polyline points="307.9,257.5 301.8,260.6 295.8,263.6 292.8,267.4 288.2,269.6 286.7,273.4"/>
<polyline points="258.0,273.4 250.5,274.2 241.4,272.7 233.8,274.2 227.0,275.7"/>
<polyline points="190.0,248.5 196.0,251.5 202.1,253.0 208.1,256.0 214.2,260.6 220.2,268.1 224.8,274.2 227.0,275.7 227.8,281.7"/>
<polyline points="258.0,273.4 265.6,275.7 274.6,277.2 283.7,281.7"/>
<polyline points="282.2,188.0 274.6,191.0 265.6,194.1 256.5,192.6"/>
<polyline points="282.2,188.0 289.7,189.5 295.8,191.0"/>
<polyline points="258.2,274.1 256.7,281.6 255.9,289.2 258.9,295.2 262.0,299.8 261.2,307.3 260.5,314.9 257.4,320.9 254.4,324.7"/>
<polyline points="258.2,274.1 263.5,280.1 269.5,286.2 275.6,290.7 278.6,295.2 280.1,302.8 283.1,307.3 286.1,310.3 289.2,316.4 290.7,325.5 292.2,333.0 290.7,342.8"/>
<polyline points="262.0,299.8 268.0,297.5 274.1,295.2 278.6,295.2 284.6,295.2 290.7,293.7"/>
<polyline points="223.4,284.6 226.4,290.7 229.5,298.2 231.0,305.8 232.5,313.4 237.8,317.1 245.3,320.9 254.4,324.7 255.9,331.5 256.7,340.6 263.5,345.1 271.0,351.1 280.1,358.7"/>
<polyline points="226.4,275.6 234.8,278.6 243.8,277.1 251.4,274.8 258.2,274.1"/>
<polyline points="223.4,284.6 231.7,282.4 240.8,280.1 249.9,277.1 258.2,274.1"/>
<polyline points="296.7,292.2 299.7,298.2 302.8,304.3 304.3,308.8 303.5,314.9 302.8,320.9 305.8,327.0 308.8,331.5 311.8,335.3"/>
<polyline points="304.3,308.8 310.3,304.3 316.4,299.8 320.0,296.7"/>
<polyline points="304.3,308.8 311.8,313.4 314.9,319.4 316.4,325.5"/>
<polyline points="290.7,342.8 298.2,340.6 305.8,339.1 311.8,335.3"/>
<polyline points="290.7,342.8 289.2,348.1 286.1,352.7 286.9,357.2"/>
<polyline points="226.4,275.6 223.4,284.6"/>
<polyline points="308.1,258.3 315.7,263.6 324.8,269.6 333.8,276.4 343.6,282.5 348.2,289.3 350.5,295.3 353.5,302.9 356.5,310.5 358.8,316.5 361.8,324.1 365.6,331.6 371.6,340.7"/>
<polyline points="305.1,277.2 311.2,278.7 317.2,277.2 323.2,272.7"/>
<polyline points="326.3,290.8 332.3,287.8 338.4,284.8 343.6,282.5"/>
<polyline points="318.7,299.9 324.8,296.8 330.8,295.3 335.3,292.3"/>
<polyline points="322.5,308.9 329.3,305.9 336.8,302.9 344.4,300.6 350.5,299.9 353.5,301.4"/>
<polyline points="339.9,327.8 341.4,322.5 345.9,319.5 352.0,318.0 358.0,315.0"/>
<polyline points="339.9,344.5 345.9,340.7 350.5,336.1 355.0,331.6 361.0,330.1 365.6,331.6"/>
<polyline points="304.8,370.0 307.0,363.2 307.8,357.2 306.3,351.2 305.5,345.1 307.8,339.1 310.8,336.0"/>
<polyline points="304.8,370.0 300.2,361.7 295.7,352.7 291.2,342.8"/>
<polyline points="304.8,370.0 297.2,366.3 288.1,362.5 279.8,359.5"/>
<polyline points="304.8,370.0 313.8,366.3 321.4,362.5 328.2,359.5 333.5,354.2 339.5,345.1"/>
<polyline points="328.2,359.5 336.5,358.7 345.6,357.2 354.6,355.7 360.7,352.7 368.2,351.9 369.7,341.3"/>
<polyline points="304.8,370.0 313.8,373.8 322.9,377.6 330.5,380.6 336.5,382.1 345.6,386.7 354.6,390.5 360.7,393.5 366.7,399.5 369.7,408.6 374.3,420.7"/>
<polyline points="304.8,370.0 309.3,376.8 315.3,384.4 320.6,390.5"/>
<polyline points="304.8,370.0 300.2,373.8 297.2,376.8"/>
<polyline points="320.6,390.5 327.4,395.0 335.0,398.0 342.5,399.5 351.6,401.0 356.1,401.0"/>
<polyline points="302.5,370.0 303.2,367.8 305.5,367.3 307.5,368.5 307.8,370.8 306.3,372.6 304.0,372.3 302.5,370.0"/>
<polyline points="369.7,341.3 375.8,348.1 381.8,354.2 387.9,358.7"/>
<polyline points="339.5,345.1 345.6,342.1 351.6,339.1 357.7,337.6 363.7,338.3 369.7,341.3"/>
<polyline points="377.2,350.0 388.5,358.3 395.3,364.4 404.4,368.9 410.5,372.7 415.0,378.7 418.0,384.8 421.0,390.8 428.6,395.3 437.7,398.4 448.2,398.4 458.8,402.9 470.0,408.2"/>
<polyline points="421.0,390.8 420.3,398.4 419.5,405.9 415.0,408.9 410.5,412.0 405.9,416.5 402.9,420.3 395.3,419.5 387.8,419.5 380.2,418.8 372.7,419.5"/>
<polyline points="421.0,390.8 428.6,399.9 434.6,403.6 440.7,402.1 448.2,398.4"/>
<polyline points="419.5,405.9 428.6,405.2 437.7,402.9 443.7,400.6"/>
<polyline points="391.6,407.4 395.3,412.0 399.9,415.0 402.9,420.3"/>
<polyline points="391.6,407.4 384.8,410.5 378.7,415.0 372.7,419.5"/>
<polyline points="358.3,394.6 362.1,399.9 365.1,405.9 368.1,412.0 372.7,419.5"/>
<polyline points="372.7,419.5 380.2,424.1 386.3,427.1 392.3,430.1 398.4,432.4 405.9,433.9 413.5,434.6 418.0,437.7 421.0,442.2 424.1,446.7"/>
<polyline points="413.5,434.6 421.0,433.1 430.1,432.4 437.7,433.1 443.7,436.1 449.7,439.2 455.8,442.2 461.8,443.7 470.0,442.9"/>
<polyline points="372.7,419.5 377.2,424.1 380.2,428.6 378.0,434.6 376.4,438.4"/>
<polyline points="402.9,420.3 396.8,425.6 392.3,430.1"/>
<polyline points="391.6,407.4 390.8,401.4 389.3,395.3 386.3,389.3 380.2,384.8"/>
<polyline points="406.7,371.2 412.0,378.7 416.5,384.8 421.0,390.8"/>
<polyline points="469.1,409.2 470.6,418.2 472.1,427.3 474.4,434.9 478.9,437.9 485.0,440.2"/>
<polyline points="469.1,409.2 477.4,413.0 485.0,418.2 492.5,423.5 500.1,427.3 510.7,432.6"/>
<polyline points="485.0,440.2 492.5,438.6 500.1,437.1 506.1,435.6 510.7,432.6"/>
<polyline points="510.7,432.6 515.2,439.4 519.0,446.2 516.7,453.0 512.2,459.8"/>
<polyline points="519.0,446.2 521.3,453.0 522.8,459.1"/>
<polyline points="516.7,453.0 522.8,456.0"/>
<polyline points="420.0,394.1 429.1,398.6 438.1,401.6 447.2,403.1 457.8,406.2 469.1,409.2"/>
<polyline points="420.0,404.6 427.6,403.9 435.1,402.4 442.7,400.9 447.2,398.6"/>
<polyline points="429.8,432.6 435.1,434.9 441.2,434.1 447.2,436.4 453.2,439.4 457.8,443.2 463.8,444.7 468.4,445.5"/>
<polyline points="420.0,436.4 423.0,440.9 426.0,447.0 427.6,453.0 426.0,459.1 429.1,463.6"/>
<polyline points="420.0,445.5 424.5,450.0 427.6,453.0"/>
<polyline points="470.6,442.4 468.4,447.0 465.3,451.5 462.8,457.2 460.8,459.1"/>
<polyline points="460.0,430.3 463.8,434.9 468.4,439.4 470.6,442.4"/>
<polyline points="445.9,465.5 445.9,470.0 446.7,477.6 445.9,485.1 446.7,491.2 446.7,497.2 447.4,504.8 448.9,510.8 449.7,516.8 447.4,522.9 444.4,528.9 441.4,535.0 436.8,539.5 433.1,544.1 430.8,548.6"/>
<polyline points="446.7,477.6 453.5,478.3 456.5,477.6"/>
<polyline points="446.7,491.2 453.5,494.2 461.0,498.7 468.6,502.5 474.6,505.5 479.9,507.0"/>
<polyline points="448.9,510.8 453.5,515.3 459.5,521.4"/>
<polyline points="479.9,507.0 479.2,513.8 477.7,517.6"/>
<polyline points="449.7,516.8 455.0,518.4 459.5,521.4 465.6,519.9"/>
<polyline points="433.8,527.4 438.4,528.2 442.9,527.4"/>
<polyline points="459.5,521.4 458.0,527.4 458.8,533.5"/>
<polyline points="336.7,553.9 344.2,558.6 353.7,561.5 359.4,569.0 365.0,576.6 368.8,582.2 378.2,581.3 387.7,582.2 395.2,585.1 402.8,583.2"/>
<polyline points="336.7,553.9 329.1,556.7 323.5,561.5 320.6,567.1 318.7,574.7 314.0,579.4 309.3,583.2"/>
<polyline points="320.6,567.1 314.0,565.2 307.4,559.6"/>
<polyline points="307.4,559.6 304.6,564.3 303.6,569.0 306.5,576.6 309.3,583.2"/>
<polyline points="402.8,583.2 401.9,591.7 405.6,598.3 410.4,604.0"/>
<polyline points="410.4,604.0 404.7,610.6 397.1,616.2 391.5,618.1 388.6,610.6"/>
<polyline points="388.6,610.6 380.1,607.7 370.7,605.8 361.2,603.0 353.7,599.2 346.1,592.6"/>
<polyline points="402.8,583.2 406.6,574.7 410.4,567.1 416.0,557.7 420.8,550.1"/>
<polyline points="410.4,604.0 408.5,612.5 404.7,618.1 397.1,620.0 393.4,618.1"/>
<polyline points="346.1,592.6 336.7,588.8 327.2,584.5 318.7,581.3 309.3,583.2"/>
<polyline points="353.7,561.5 363.1,561.1 374.5,559.2 385.8,555.8 397.1,553.5 408.5,551.1 420.8,550.1"/>
<polyline points="406.6,596.4 400.9,604.9 395.2,612.5 388.6,610.6"/>
<polyline points="156.0,427.0 162.0,433.0 166.0,440.0 167.0,450.0 168.0,458.0 162.0,464.0 158.0,467.0 160.0,474.0 164.0,481.0 170.0,486.0 175.0,492.0 178.0,501.0"/>
<polyline points="156.0,427.0 164.0,432.0 174.0,430.0 184.0,426.0 193.0,417.0"/>
<polyline points="193.0,417.0 198.0,426.0 202.0,434.0 198.0,440.0 192.0,445.0 186.0,447.0 178.0,452.0 170.0,457.0 162.0,464.0"/>
<polyline points="156.0,427.0 150.0,430.0 148.0,435.0"/>
<polyline points="178.0,501.0 170.0,499.0 160.0,498.0"/>
<polyline points="150.0,168.9 156.9,173.5 165.0,175.8 173.1,178.1 181.2,181.6"/>
<polyline points="181.2,181.6 190.4,182.2 202.0,182.7 211.2,181.6 219.3,180.4"/>
<polyline points="219.3,180.4 218.7,188.5 217.0,197.8 215.9,204.7 214.7,211.6"/>
<polyline points="181.2,181.6 176.6,186.2 170.8,190.8 165.0,194.3"/>
<polyline points="202.0,204.7 193.9,205.9 184.7,206.4 175.4,208.2 167.3,211.0 160.4,212.8"/>
<polyline points="162.7,165.4 165.0,170.0 167.3,174.7 173.1,178.1"/>
<polyline points="177.7,166.6 178.9,173.5 181.2,181.6"/>
<polyline points="188.1,165.4 185.8,173.5 181.2,181.6"/>
<polyline points="177.1,178.7 178.9,176.7 181.8,176.4 184.4,178.1 185.2,181.0 184.4,184.1 181.8,185.6 178.9,185.1 177.1,182.7 177.1,178.7"/>
<polyline points="270.4,178.9 268.1,173.1 267.0,169.6"/>
<polyline points="270.4,180.0 269.9,189.3 269.3,198.5 268.7,205.5"/>
<polyline points="267.0,170.8 276.2,169.6 287.8,168.5 299.3,169.6"/>
<polyline points="245.0,184.7 245.0,196.2 244.4,207.8 244.4,225.0"/>
<polyline points="298.2,198.5 297.0,207.8 296.4,214.7 295.9,225.0"/>
<polyline points="299.3,183.5 308.6,176.6 320.0,167.3"/>
</g>
<g id="lakesblue" fill="none" stroke="#5885EE" stroke-width="1.9" stroke-linejoin="round" stroke-linecap="round">
<polyline points="190.4,145.8 187.0,150.4 183.5,155.0 180.6,159.6 178.9,163.1 177.7,166.6"/>
<polyline points="184.7,153.9 187.0,159.6 188.1,165.4"/>
<polyline points="165.0,151.6 162.7,156.2 159.2,160.8 158.1,164.3"/>
<polyline points="213.5,165.4 213.0,170.0 214.1,173.5"/>
<polyline points="181.0,403.6 184.0,402.0 189.0,400.0 192.0,402.4"/>
<polyline points="192.0,404.0 196.0,409.0 199.0,414.0 201.0,420.0"/>
<polyline points="146.0,410.0 147.0,414.0 145.6,418.0"/>
<polyline points="197.0,426.0 200.0,429.0"/>
</g>
<polygon points="292.4,192.5 299.3,188.1 298.2,196.2" fill="#fff" stroke="#5885EE" stroke-width="0.5"/>

<g id="labels" fill="#151515">
<text x="104" y="166.79" font-size="4.14" font-weight="bold" textLength="13" lengthAdjust="spacingAndGlyphs">Aosta</text>
<rect x="104" y="167.37" width="13" height="0.6"/>
<text x="133" y="176.49" font-size="4.14" font-weight="bold" textLength="13" lengthAdjust="spacingAndGlyphs">Biella</text>
<text x="151.8" y="183.19" font-size="4.14" font-weight="bold" textLength="16.6" lengthAdjust="spacingAndGlyphs">Novara</text>
<text x="171.4" y="182.689" font-size="6.08" font-weight="bold" textLength="18.9" lengthAdjust="spacingAndGlyphs">Milan</text>
<text x="170.7" y="164.814" font-size="5.04" font-weight="bold" textLength="13.6" lengthAdjust="spacingAndGlyphs">Como</text>
<text x="116.3" y="203.604" font-size="6.4" font-weight="bold" textLength="17.3" lengthAdjust="spacingAndGlyphs">Turin</text>
<text x="145.7" y="212.126" font-size="3.96" font-weight="bold" textLength="25" lengthAdjust="spacingAndGlyphs">Alessandria</text>
<text x="252.3" y="121.555" font-size="4.32" font-weight="bold" textLength="20.1" lengthAdjust="spacingAndGlyphs">Bolzano</text>
<rect x="252.3" y="122.16" width="20.1" height="0.6"/>
<text x="254.2" y="127.255" font-size="4.32" font-weight="bold" textLength="15.1" lengthAdjust="spacingAndGlyphs">Bozen</text>
<rect x="254.2" y="127.86" width="15.1" height="0.6"/>
<text x="245.9" y="150.155" font-size="4.32" font-weight="bold" textLength="15.9" lengthAdjust="spacingAndGlyphs">Trento</text>
<rect x="245.9" y="150.76" width="15.9" height="0.6"/>
<text x="190" y="170.155" font-size="4.32" font-weight="bold" textLength="20.4" lengthAdjust="spacingAndGlyphs">Bergamo</text>
<text x="211" y="178.826" font-size="3.96" font-weight="bold" textLength="18.6" lengthAdjust="spacingAndGlyphs">Brescia</text>
<text x="241.4" y="184.126" font-size="3.96" font-weight="bold" textLength="16.6" lengthAdjust="spacingAndGlyphs">Verona</text>
<text x="260.3" y="178.879" font-size="5.22" font-weight="bold" textLength="19.7" lengthAdjust="spacingAndGlyphs">Vicenza</text>
<text x="287.5" y="183.704" font-size="6.4" font-weight="bold" textLength="19.5" lengthAdjust="spacingAndGlyphs">Venice</text>
<text x="326" y="151.09" font-size="4.14" font-weight="bold" textLength="14.5" lengthAdjust="spacingAndGlyphs">Udine</text>
<text x="345.3" y="180.755" font-size="4.32" font-weight="bold" textLength="16.7" lengthAdjust="spacingAndGlyphs">Trieste</text>
<rect x="345.3" y="181.36" width="16.7" height="0.6"/>
<text x="187" y="204.49" font-size="4.14" font-weight="bold" textLength="25.7" lengthAdjust="spacingAndGlyphs">Piacenza</text>
<text x="216.4" y="218.99" font-size="4.14" font-weight="bold" textLength="15.9" lengthAdjust="spacingAndGlyphs">Parma</text>
<text x="236.8" y="225.555" font-size="4.32" font-weight="bold" textLength="19.7" lengthAdjust="spacingAndGlyphs">Modena</text>
<text x="247.4" y="234.219" font-size="6.72" font-weight="bold" textLength="30.3" lengthAdjust="spacingAndGlyphs">Bologna</text>
<text x="264" y="216.755" font-size="4.32" font-weight="bold" textLength="18.2" lengthAdjust="spacingAndGlyphs">Ferrara</text>
<text x="283.7" y="239.155" font-size="4.32" font-weight="bold" textLength="21.9" lengthAdjust="spacingAndGlyphs">Ravenna</text>
<text x="274.6" y="193.855" font-size="4.32" font-weight="bold" textLength="15.9" lengthAdjust="spacingAndGlyphs">Padua</text>
<text x="243" y="272.119" font-size="6.72" font-weight="bold" textLength="31" lengthAdjust="spacingAndGlyphs">Florence</text>
<text x="222" y="275.244" font-size="5.4" font-weight="bold" textLength="10.5" lengthAdjust="spacingAndGlyphs">Pisa</text>
<text x="214.4" y="284.29" font-size="4.14" font-weight="bold" textLength="18.1" lengthAdjust="spacingAndGlyphs">Livorno</text>
<text x="242.3" y="324.255" font-size="4.32" font-weight="bold" textLength="22.7" lengthAdjust="spacingAndGlyphs">Grosseto</text>
<text x="282.6" y="341.755" font-size="4.32" font-weight="bold" textLength="15.4" lengthAdjust="spacingAndGlyphs">Viterbo</text>
<rect x="282.6" y="342.36" width="15.4" height="0.6"/>
<text x="306.2" y="334.455" font-size="4.32" font-weight="bold" textLength="11" lengthAdjust="spacingAndGlyphs">Terni</text>
<rect x="306.2" y="335.06" width="11" height="0.6"/>
<text x="262.7" y="358.355" font-size="4.32" font-weight="bold" textLength="33.3" lengthAdjust="spacingAndGlyphs">Civitavecchia</text>
<rect x="262.7" y="358.96" width="33.3" height="0.6"/>
<text x="301.3" y="257.49" font-size="4.14" font-weight="bold" textLength="14.4" lengthAdjust="spacingAndGlyphs">Rimini</text>
<rect x="301.3" y="258.07" width="14.4" height="0.6"/>
<text x="333.8" y="281.055" font-size="4.32" font-weight="bold" textLength="18.9" lengthAdjust="spacingAndGlyphs">Ancona</text>
<text x="339.1" y="309.82" font-size="4.5" font-weight="bold" textLength="37" lengthAdjust="spacingAndGlyphs">San Benedetto</text>
<rect x="339.1" y="310.45" width="37" height="0.6"/>
<text x="344.7" y="314.82" font-size="4.5" font-weight="bold" textLength="25.1" lengthAdjust="spacingAndGlyphs">del Tronto</text>
<rect x="344.7" y="315.45" width="25.1" height="0.6"/>
<text x="360" y="340.144" font-size="5.4" font-weight="bold" textLength="20.5" lengthAdjust="spacingAndGlyphs">Pescara</text>
<rect x="360" y="340.9" width="20.5" height="0.6"/>
<text x="332.5" y="344.555" font-size="4.32" font-weight="bold" textLength="16.7" lengthAdjust="spacingAndGlyphs">L&#39;Aquila</text>
<text x="360.7" y="352.885" font-size="4.68" font-weight="bold" textLength="14.3" lengthAdjust="spacingAndGlyphs">Chieti</text>
<rect x="360.7" y="353.54" width="14.3" height="0.6"/>
<text x="309.3" y="372.88" font-size="8" font-weight="bold" textLength="22.7" lengthAdjust="spacingAndGlyphs">Rome</text>
<text x="291" y="376.92" font-size="4.5" font-weight="bold" textLength="12" lengthAdjust="spacingAndGlyphs">Ostia</text>
<rect x="291" y="377.55" width="12" height="0.6"/>
<text x="313.8" y="389.755" font-size="4.32" font-weight="bold" textLength="14.4" lengthAdjust="spacingAndGlyphs">Latina</text>
<text x="325.2" y="381.155" font-size="4.32" font-weight="bold" textLength="24.1" lengthAdjust="spacingAndGlyphs">Frosinone</text>
<text x="382.5" y="358.29" font-size="4.14" font-weight="bold" textLength="12.8" lengthAdjust="spacingAndGlyphs">Vasto</text>
<text x="412" y="389.42" font-size="4.5" font-weight="bold" textLength="16.6" lengthAdjust="spacingAndGlyphs">Foggia</text>
<text x="438.2" y="397.82" font-size="4.5" font-weight="bold" textLength="19" lengthAdjust="spacingAndGlyphs">Barletta</text>
<text x="378.7" y="407.52" font-size="4.5" font-weight="bold" textLength="25.7" lengthAdjust="spacingAndGlyphs">Benevento</text>
<text x="394.6" y="420.42" font-size="4.5" font-weight="bold" textLength="18.1" lengthAdjust="spacingAndGlyphs">Avellino</text>
<text x="359.8" y="419.777" font-size="6.88" font-weight="bold" textLength="23" lengthAdjust="spacingAndGlyphs">Naples</text>
<text x="381.7" y="429.938" font-size="5.94" font-weight="bold" textLength="18.9" lengthAdjust="spacingAndGlyphs">Salerno</text>
<text x="365.9" y="439.02" font-size="4.5" font-weight="bold" textLength="21.1" lengthAdjust="spacingAndGlyphs">Sorrento</text>
<rect x="365.9" y="439.65" width="21.1" height="0.6"/>
<text x="420.2" y="431.22" font-size="4.5" font-weight="bold" textLength="19.6" lengthAdjust="spacingAndGlyphs">Potenza</text>
<rect x="420.2" y="431.85" width="19.6" height="0.6"/>
<text x="451.2" y="429.755" font-size="4.32" font-weight="bold" textLength="17" lengthAdjust="spacingAndGlyphs">Matera</text>
<text x="463" y="406.892" font-size="7.2" font-weight="bold" textLength="14.4" lengthAdjust="spacingAndGlyphs">Bari</text>
<text x="500.8" y="431.22" font-size="4.5" font-weight="bold" textLength="18.2" lengthAdjust="spacingAndGlyphs">Brindisi</text>
<text x="511.4" y="445.22" font-size="4.5" font-weight="bold" textLength="14.4" lengthAdjust="spacingAndGlyphs">Lecce</text>
<text x="502.4" y="460.32" font-size="4.5" font-weight="bold" textLength="19.6" lengthAdjust="spacingAndGlyphs">Gallipoli</text>
<text x="475.9" y="439.755" font-size="4.32" font-weight="bold" textLength="18.1" lengthAdjust="spacingAndGlyphs">Taranto</text>
<text x="435.3" y="496.155" font-size="4.32" font-weight="bold" textLength="21.2" lengthAdjust="spacingAndGlyphs">Cosenza</text>
<text x="438.4" y="507.62" font-size="4.5" font-weight="bold" textLength="21.1" lengthAdjust="spacingAndGlyphs">Lamezia</text>
<rect x="438.4" y="508.25" width="21.1" height="0.6"/>
<text x="441.4" y="512.12" font-size="4.5" font-weight="bold" textLength="15.1" lengthAdjust="spacingAndGlyphs">Terme</text>
<rect x="441.4" y="512.75" width="15.1" height="0.6"/>
<text x="470" y="507.185" font-size="4.68" font-weight="bold" textLength="19.7" lengthAdjust="spacingAndGlyphs">Crotone</text>
<rect x="470" y="507.84" width="19.7" height="0.6"/>
<text x="446.7" y="522.414" font-size="5.04" font-weight="bold" textLength="25.7" lengthAdjust="spacingAndGlyphs">Catanzaro</text>
<rect x="446.7" y="523.12" width="25.7" height="0.6"/>
<text x="424.8" y="526.82" font-size="4.5" font-weight="bold" textLength="17.3" lengthAdjust="spacingAndGlyphs">Tropea</text>
<rect x="424.8" y="527.45" width="17.3" height="0.6"/>
<text x="408.9" y="550.155" font-size="4.32" font-weight="bold" textLength="21.1" lengthAdjust="spacingAndGlyphs">Messina</text>
<rect x="408.9" y="550.76" width="21.1" height="0.6"/>
<text x="399.9" y="566.555" font-size="4.32" font-weight="bold" textLength="21.8" lengthAdjust="spacingAndGlyphs">Taormina</text>
<rect x="399.9" y="567.16" width="21.8" height="0.6"/>
<text x="323.5" y="552.977" font-size="6.88" font-weight="bold" textLength="29.2" lengthAdjust="spacingAndGlyphs">Palermo</text>
<rect x="323.5" y="553.94" width="29.2" height="0.6"/>
<text x="298" y="557.755" font-size="4.32" font-weight="bold" textLength="17" lengthAdjust="spacingAndGlyphs">Trapani</text>
<rect x="298" y="558.36" width="17" height="0.6"/>
<text x="293.2" y="568.255" font-size="4.32" font-weight="bold" textLength="19.8" lengthAdjust="spacingAndGlyphs">Marsala</text>
<rect x="293.2" y="568.86" width="19.8" height="0.6"/>
<text x="299.8" y="582.855" font-size="4.32" font-weight="bold" textLength="18" lengthAdjust="spacingAndGlyphs">Mazara</text>
<rect x="299.8" y="583.46" width="18" height="0.6"/>
<text x="298" y="587.555" font-size="4.32" font-weight="bold" textLength="21.7" lengthAdjust="spacingAndGlyphs">del Vallo</text>
<rect x="298" y="588.16" width="21.7" height="0.6"/>
<text x="332.9" y="562.055" font-size="4.32" font-weight="bold" textLength="19.8" lengthAdjust="spacingAndGlyphs">Bagheria</text>
<rect x="332.9" y="562.66" width="19.8" height="0.6"/>
<text x="355.6" y="557.755" font-size="4.32" font-weight="bold" textLength="14.1" lengthAdjust="spacingAndGlyphs">Cefalù</text>
<rect x="355.6" y="558.36" width="14.1" height="0.6"/>
<text x="334.8" y="591.355" font-size="4.32" font-weight="bold" textLength="23.6" lengthAdjust="spacingAndGlyphs">Agrigento</text>
<rect x="334.8" y="591.96" width="23.6" height="0.6"/>
<text x="380.1" y="609.255" font-size="4.32" font-weight="bold" textLength="18.9" lengthAdjust="spacingAndGlyphs">Ragusa</text>
<rect x="380.1" y="609.86" width="18.9" height="0.6"/>
<text x="399" y="602.774" font-size="5.76" font-weight="bold" textLength="22.7" lengthAdjust="spacingAndGlyphs">Syracuse</text>
<rect x="399" y="603.58" width="22.7" height="0.6"/>
<text x="389.6" y="582.592" font-size="7.2" font-weight="bold" textLength="26.4" lengthAdjust="spacingAndGlyphs">Catania</text>
<text x="187" y="416.555" font-size="4.32" font-weight="bold" textLength="12" lengthAdjust="spacingAndGlyphs">Olbia</text>
<text x="148" y="426.955" font-size="4.32" font-weight="bold" textLength="18" lengthAdjust="spacingAndGlyphs">Sassari</text>
<rect x="148" y="427.56" width="18" height="0.6"/>
<text x="139" y="434.555" font-size="4.32" font-weight="bold" textLength="18" lengthAdjust="spacingAndGlyphs">Alghero</text>
<text x="179" y="447.155" font-size="4.32" font-weight="bold" textLength="15" lengthAdjust="spacingAndGlyphs">Nuoro</text>
<rect x="179" y="447.76" width="15" height="0.6"/>
<text x="149" y="467.555" font-size="4.32" font-weight="bold" textLength="20" lengthAdjust="spacingAndGlyphs">Oristano</text>
<rect x="149" y="468.16" width="20" height="0.6"/>
<text x="169" y="500.155" font-size="4.32" font-weight="bold" textLength="19" lengthAdjust="spacingAndGlyphs">Cagliari</text>
<rect x="169" y="500.76" width="19" height="0.6"/>
<text x="161" y="238.419" font-size="6.72" font-weight="bold" textLength="22.6" lengthAdjust="spacingAndGlyphs">Genoa</text>
<text x="118.5" y="269.69" font-size="4.14" font-weight="bold" textLength="21.3" lengthAdjust="spacingAndGlyphs">Savona</text>
<rect x="118.5" y="270.27" width="21.3" height="0.6"/>
<text x="111.4" y="240.49" font-size="4.14" font-weight="bold" textLength="16" lengthAdjust="spacingAndGlyphs">Cuneo</text>
</g>
<g id="cities" fill="#5885EE">
<circle cx="111" cy="168.4" r="1.49"/>
<circle cx="139" cy="177.4" r="1.38"/>
<circle cx="160" cy="184.2" r="1.61"/>
<circle cx="181.3" cy="183.5" r="2.76"/>
<circle cx="178.2" cy="165.3" r="1.61"/>
<circle cx="125.3" cy="203.9" r="2.53"/>
<circle cx="159.3" cy="213" r="1.72"/>
<circle cx="199.8" cy="170.6" r="1.61"/>
<circle cx="219.5" cy="180.4" r="1.72"/>
<circle cx="262.5" cy="129" r="1.61"/>
<circle cx="254.2" cy="151.7" r="1.49"/>
<circle cx="249.7" cy="184.2" r="1.72"/>
<circle cx="268.6" cy="179.6" r="1.84"/>
<circle cx="332.9" cy="151.6" r="1.61"/>
<circle cx="354.8" cy="177.2" r="2.07"/>
<circle cx="303.4" cy="181.8" r="2.53"/>
<circle cx="282.2" cy="188" r="1.84"/>
<circle cx="200.6" cy="204.6" r="1.72"/>
<circle cx="224" cy="219.8" r="1.61"/>
<circle cx="245.9" cy="226.6" r="1.72"/>
<circle cx="261.8" cy="235.6" r="2.53"/>
<circle cx="272.4" cy="216.7" r="1.61"/>
<circle cx="294.3" cy="239.4" r="1.49"/>
<circle cx="307.9" cy="257.5" r="1.72"/>
<circle cx="258.2" cy="274.1" r="2.53"/>
<circle cx="226.4" cy="275.6" r="2.07"/>
<circle cx="223.4" cy="284.6" r="1.72"/>
<circle cx="254.4" cy="324.7" r="1.72"/>
<circle cx="290.7" cy="342.8" r="1.61"/>
<circle cx="311.5" cy="335.3" r="1.61"/>
<circle cx="280" cy="359" r="1.72"/>
<circle cx="343.6" cy="282.5" r="1.72"/>
<circle cx="356.5" cy="310.5" r="1.49"/>
<circle cx="371" cy="341" r="1.84"/>
<circle cx="339.7" cy="344.8" r="1.61"/>
<circle cx="368.2" cy="351.9" r="1.49"/>
<circle cx="304.8" cy="370" r="2.76"/>
<circle cx="297.2" cy="376.8" r="1.72"/>
<circle cx="320.6" cy="390.4" r="1.61"/>
<circle cx="336.5" cy="382.1" r="1.72"/>
<circle cx="388.5" cy="358.3" r="1.49"/>
<circle cx="421" cy="390.8" r="1.84"/>
<circle cx="447.7" cy="398.5" r="1.72"/>
<circle cx="391.6" cy="407.4" r="1.61"/>
<circle cx="402.9" cy="420.3" r="1.61"/>
<circle cx="372.7" cy="419.5" r="2.99"/>
<circle cx="392.3" cy="430.1" r="2.30"/>
<circle cx="376.4" cy="438.4" r="1.61"/>
<circle cx="430" cy="432.5" r="1.72"/>
<circle cx="459.8" cy="430.2" r="1.49"/>
<circle cx="469.1" cy="409.2" r="2.30"/>
<circle cx="510.7" cy="432.6" r="2.07"/>
<circle cx="519" cy="446.2" r="2.07"/>
<circle cx="512.2" cy="459.8" r="1.72"/>
<circle cx="485" cy="440.2" r="1.84"/>
<circle cx="446.7" cy="497.2" r="1.84"/>
<circle cx="448.9" cy="510.8" r="1.72"/>
<circle cx="479.9" cy="507" r="1.84"/>
<circle cx="459.5" cy="521.4" r="1.84"/>
<circle cx="433.8" cy="527.4" r="1.61"/>
<circle cx="421" cy="549.6" r="1.72"/>
<circle cx="410.8" cy="566.9" r="1.49"/>
<circle cx="307.4" cy="559.6" r="1.72"/>
<circle cx="303.6" cy="569" r="1.72"/>
<circle cx="309.3" cy="583.2" r="1.49"/>
<circle cx="336.7" cy="553.9" r="2.30"/>
<circle cx="362.2" cy="558.6" r="1.38"/>
<circle cx="346.1" cy="592.6" r="1.84"/>
<circle cx="388.6" cy="610.6" r="1.72"/>
<circle cx="410.4" cy="604" r="1.84"/>
<circle cx="402.8" cy="583.2" r="2.53"/>
<circle cx="193" cy="417" r="1.84"/>
<circle cx="156" cy="427" r="1.95"/>
<circle cx="148" cy="435" r="1.95"/>
<circle cx="186" cy="447" r="1.72"/>
<circle cx="158" cy="467" r="2.07"/>
<circle cx="178" cy="501" r="2.30"/>
<circle cx="172.8" cy="238.6" r="2.18"/>
<circle cx="127.4" cy="269" r="1.61"/>
<circle cx="118.5" cy="241" r="1.38"/>
<circle cx="204.5" cy="312.6" r="1.3"/>
<circle cx="214.4" cy="335.3" r="1.1"/>
<circle cx="222.7" cy="348.1" r="1"/>
<circle cx="244.6" cy="346.6" r="1.3"/>
<circle cx="331" cy="526" r="1.1"/>
<circle cx="289.4" cy="563.3" r="1"/>
<circle cx="408.9" cy="522.1" r="1.1"/>
<circle cx="394.5" cy="533.5" r="1.2"/>
<circle cx="402.8" cy="530.5" r="0.9"/>
<circle cx="375" cy="534" r="0.9"/>
<circle cx="384" cy="533" r="1"/>
<circle cx="147" cy="506" r="1.2"/>
<circle cx="152" cy="511.6" r="1.2"/>
<ellipse cx="398.3" cy="539" rx="1" ry="2.8" transform="rotate(-15 398.3 539)"/>
<ellipse cx="288.3" cy="617.4" rx="1.4" ry="2.3" transform="rotate(-30 288.3 617.4)" fill="#f8c8e4" stroke="#5885EE" stroke-width="0.8"/>
<ellipse cx="358.6" cy="428.4" rx="2.6" ry="1.5" fill="#fbe3f1" stroke="#5885EE" stroke-width="0.8"/>
<path d="M311 146.3 L312.5 150.8 L314 155.3 L315.5 152.3 L316.3 147.8 L317 145.5 L315 149 L314 152 L312.6 148 Z" stroke="#5885EE" stroke-width="0.8"/>
</g>
</g>
<g id="selection">
<rect x="85.8" y="96.2" width="446.8" height="529.0" fill="none" stroke="#8298dc" stroke-width="1"/>
<rect x="81.5" y="91.9" width="8.6" height="8.6" fill="#fff" stroke="#8298dc" stroke-width="1"/>
<rect x="304.9" y="91.9" width="8.6" height="8.6" fill="#fff" stroke="#8298dc" stroke-width="1"/>
<rect x="528.3" y="91.9" width="8.6" height="8.6" fill="#fff" stroke="#8298dc" stroke-width="1"/>
<rect x="81.5" y="356.4" width="8.6" height="8.6" fill="#fff" stroke="#8298dc" stroke-width="1"/>
<rect x="528.3" y="356.4" width="8.6" height="8.6" fill="#fff" stroke="#8298dc" stroke-width="1"/>
<rect x="81.5" y="620.9" width="8.6" height="8.6" fill="#fff" stroke="#8298dc" stroke-width="1"/>
<rect x="304.9" y="620.9" width="8.6" height="8.6" fill="#fff" stroke="#8298dc" stroke-width="1"/>
<rect x="528.3" y="620.9" width="8.6" height="8.6" fill="#fff" stroke="#8298dc" stroke-width="1"/>
<line x1="536.9" y1="360.70000000000005" x2="542.6" y2="360.70000000000005" stroke="#8298dc" stroke-width="1"/>
<circle cx="545.1" cy="360.70000000000005" r="2.5" fill="#fff" stroke="#8298dc" stroke-width="1"/>
</g>
<g id="ui" opacity="0.999">
<rect x="11.3" y="8" width="11.6" height="11.2" rx="2" fill="#330000"/>
<text x="13.3" y="16.425" font-size="7.5" fill="#ff9a00" stroke="#ff9a00" stroke-width="0.3" font-weight="bold" textLength="7.7" lengthAdjust="spacingAndGlyphs">Ai</text>
<path d="M41 7.8 L48.3 14.2 L46.3 14.2 L46.3 20 L42.8 20 L42.8 16 L39.2 16 L39.2 20 L35.7 20 L35.7 14.2 L33.7 14.2 Z" fill="#d0d0d0"/>
<rect x="68.5" y="5" width="1" height="16" fill="#585858"/>
<rect x="78" y="8" width="5.8" height="8.6" fill="#cfcfcf"/>
<rect x="85" y="8" width="6.3" height="2.2" fill="#cfcfcf"/>
<rect x="85" y="11.2" width="6.3" height="2.2" fill="#cfcfcf"/>
<rect x="85" y="14.4" width="6.3" height="2.2" fill="#cfcfcf"/>
<path d="M98 10.8 L100.8 13.4 L103.6 10.8" fill="none" stroke="#e0e0e0" stroke-width="1.3"/>
<text x="9" y="35.96" font-size="9.6" fill="#e2e2e2" stroke="#e2e2e2" stroke-width="0.3" font-weight="normal" textLength="13.8" lengthAdjust="spacingAndGlyphs">File</text>
<text x="34.4" y="35.96" font-size="9.6" fill="#e2e2e2" stroke="#e2e2e2" stroke-width="0.3" font-weight="normal" textLength="16" lengthAdjust="spacingAndGlyphs">Edit</text>
<text x="61.5" y="35.96" font-size="9.6" fill="#e2e2e2" stroke="#e2e2e2" stroke-width="0.3" font-weight="normal" textLength="28.1" lengthAdjust="spacingAndGlyphs">Object</text>
<text x="100.6" y="35.96" font-size="9.6" fill="#e2e2e2" stroke="#e2e2e2" stroke-width="0.3" font-weight="normal" textLength="19.2" lengthAdjust="spacingAndGlyphs">Type</text>
<text x="132" y="35.96" font-size="9.6" fill="#e2e2e2" stroke="#e2e2e2" stroke-width="0.3" font-weight="normal" textLength="24" lengthAdjust="spacingAndGlyphs">Select</text>
<text x="167.3" y="35.96" font-size="9.6" fill="#e2e2e2" stroke="#e2e2e2" stroke-width="0.3" font-weight="normal" textLength="23.9" lengthAdjust="spacingAndGlyphs">Effect</text>
<text x="202.5" y="35.96" font-size="9.6" fill="#e2e2e2" stroke="#e2e2e2" stroke-width="0.3" font-weight="normal" textLength="19" lengthAdjust="spacingAndGlyphs">View</text>
<text x="232.7" y="35.96" font-size="9.6" fill="#e2e2e2" stroke="#e2e2e2" stroke-width="0.3" font-weight="normal" textLength="34.3" lengthAdjust="spacingAndGlyphs">Window</text>
<text x="278" y="35.96" font-size="9.6" fill="#e2e2e2" stroke="#e2e2e2" stroke-width="0.3" font-weight="normal" textLength="19.2" lengthAdjust="spacingAndGlyphs">Help</text>
<rect x="474" y="5" width="1" height="16" fill="#585858"/>
<text x="484" y="16.555" font-size="9.3" fill="#dedede" stroke="#dedede" stroke-width="0.3" font-weight="normal" textLength="68" lengthAdjust="spacingAndGlyphs">Essentials Classic</text>
<path d="M561.5 12.6 L564.5 15.4 L567.5 12.6" fill="none" stroke="#e0e0e0" stroke-width="1.3"/>
<rect x="578.5" y="5" width="1" height="16" fill="#585858"/>
<rect x="584.5" y="6" width="132" height="15" rx="1.5" fill="#434343" stroke="#5c5c5c" stroke-width="1"/>
<circle cx="590.8" cy="12.6" r="2.7" fill="none" stroke="#ddd" stroke-width="1.2"/><path d="M592.8 14.6 L595.3 17.2" stroke="#ddd" stroke-width="1.3"/>
<path d="M596.6 12.3 L598.6 14.2 L600.6 12.3" fill="none" stroke="#ddd" stroke-width="1"/>
<text x="604.5" y="16.75" font-size="9" fill="#8f8f8f" stroke="#8f8f8f" stroke-width="0.3" font-weight="normal" textLength="74.5" lengthAdjust="spacingAndGlyphs">Search Adobe Stock</text>
<rect x="724" y="2" width="64" height="13.5" fill="#575757"/>
<rect x="745.5" y="2" width="1" height="13.5" fill="#484848"/>
<rect x="766.3" y="2" width="1" height="13.5" fill="#484848"/>
<rect x="730" y="9.2" width="8.6" height="2.2" fill="#c8c8c8"/>
<rect x="752.6" y="6" width="7" height="5.2" fill="none" stroke="#c8c8c8" stroke-width="1.4"/>
<path d="M774.5 4.8 L781.3 10.8 M781.3 4.8 L774.5 10.8" stroke="#c8c8c8" stroke-width="1.6" fill="none"/>
<path d="M8 48 V65" stroke="#444" stroke-width="1" stroke-dasharray="1 1"/>
<text x="14.5" y="60.305" font-size="8.3" fill="#c8c8c8" stroke="#c8c8c8" stroke-width="0.3" font-weight="normal" textLength="21.5" lengthAdjust="spacingAndGlyphs">Group</text>
<rect x="70.8" y="47" width="1" height="19" fill="#484848"/>
<text x="77.5" y="59.505" font-size="8.3" fill="#f0f0f0" stroke="#f0f0f0" stroke-width="0.3" font-weight="bold" textLength="28.5" lengthAdjust="spacingAndGlyphs">Opacity:</text>
<path d="M77.5 62 H106" stroke="#cfcfcf" stroke-width="0.8" stroke-dasharray="1 0.6"/>
<rect x="111.5" y="48.5" width="39" height="15.5" fill="#434343" stroke="#5a5a5a" stroke-width="0.8"/>
<text x="113.8" y="59.705" font-size="8.3" fill="#f0f0f0" stroke="#f0f0f0" stroke-width="0.3" font-weight="normal" textLength="18.7" lengthAdjust="spacingAndGlyphs">100%</text>
<rect x="150.5" y="48.5" width="14" height="15.5" fill="#4c4c4c" stroke="#5e5e5e" stroke-width="0.8"/>
<path d="M155.4 53 L158.6 56.3 L155.4 59.6" fill="none" stroke="#f0f0f0" stroke-width="1.4"/>
<rect x="169" y="47" width="1" height="19" fill="#484848"/>
<circle cx="184.6" cy="56" r="6.3" fill="#cfcfcf" stroke="#e8e8e8" stroke-width="0.8"/>
<path d="M184.6 56 L181 61 A6.2 6.2 0 0 0 187 61.6 Z" fill="#444"/>
<path d="M184.6 56 L179 53.5 M184.6 56 L183 50 M184.6 56 L188 50.6 M184.6 56 L190.6 55 M184.6 56 L189.5 60" stroke="#9a9a9a" stroke-width="0.6"/>
<rect x="199" y="47" width="1" height="19" fill="#484848"/>
<rect x="209.6" y="51" width="10" height="10" fill="none" stroke="#c8c8c8" stroke-width="1.1" stroke-dasharray="1.4 1.4"/>
<path d="M222.6 55.6 L225 57.8 L227.4 55.6" fill="none" stroke="#c8c8c8" stroke-width="1"/>
<rect x="239.4" y="49" width="1.2" height="14" fill="#bdbdbd"/>
<rect x="241.5" y="51" width="6" height="4.5" fill="#bdbdbd"/>
<rect x="241.5" y="57" width="11" height="4.2" fill="#bdbdbd"/>
<rect x="265.4" y="49" width="1.2" height="14" fill="#bdbdbd"/>
<rect x="262.5" y="51" width="7.5" height="4.5" fill="#bdbdbd"/>
<rect x="261" y="57" width="10.5" height="4.2" fill="#bdbdbd"/>
<rect x="292.9" y="49" width="1.2" height="14" fill="#bdbdbd"/>
<rect x="285.5" y="51" width="6.5" height="4.5" fill="#bdbdbd"/>
<rect x="281.5" y="57" width="10.5" height="4.2" fill="#bdbdbd"/>
<rect x="304.5" y="49.4" width="14" height="1.2" fill="#bdbdbd"/>
<rect x="306" y="51.3" width="5" height="10.2" fill="#bdbdbd"/>
<rect x="312.3" y="51.3" width="5" height="6.2" fill="#bdbdbd"/>
<rect x="324.5" y="55" width="14" height="1.2" fill="#bdbdbd"/>
<rect x="327" y="50.5" width="4.3" height="10.1" fill="#bdbdbd"/>
<rect x="332.7" y="52.3" width="4.3" height="6.5" fill="#bdbdbd"/>
<rect x="345" y="61.4" width="14" height="1.2" fill="#bdbdbd"/>
<rect x="347" y="50.8" width="4.5" height="10.2" fill="#bdbdbd"/>
<rect x="353" y="54" width="4.5" height="7" fill="#bdbdbd"/>
<rect x="369" y="49.9" width="14" height="1.2" fill="#bdbdbd"/>
<rect x="369" y="56.4" width="14" height="1.2" fill="#bdbdbd"/>
<rect x="372" y="51.5" width="8.5" height="3.1" fill="#bdbdbd"/>
<rect x="372" y="58" width="8.5" height="4" fill="#bdbdbd"/>
<rect x="389.5" y="51.9" width="14" height="1.2" fill="#bdbdbd"/>
<rect x="389.5" y="59" width="14" height="1.2" fill="#bdbdbd"/>
<rect x="393" y="50.5" width="7" height="4.1" fill="#bdbdbd"/>
<rect x="392" y="57.6" width="9" height="4" fill="#bdbdbd"/>
<rect x="409.5" y="53.4" width="14" height="1.2" fill="#bdbdbd"/>
<rect x="409.5" y="61.4" width="14" height="1.2" fill="#bdbdbd"/>
<rect x="413.5" y="50.5" width="6.5" height="2.7" fill="#bdbdbd"/>
<rect x="412" y="56.6" width="9" height="4.4" fill="#bdbdbd"/>
<rect x="433.9" y="49" width="1.2" height="14" fill="#bdbdbd"/>
<rect x="441.9" y="49" width="1.2" height="14" fill="#bdbdbd"/>
<rect x="435.5" y="51.5" width="4" height="9" fill="#bdbdbd"/>
<rect x="443.5" y="53" width="3.5" height="6" fill="#bdbdbd"/>
<rect x="456.4" y="49" width="1.2" height="14" fill="#bdbdbd"/>
<rect x="463.9" y="49" width="1.2" height="14" fill="#bdbdbd"/>
<rect x="455" y="51" width="4.5" height="10" fill="#bdbdbd"/>
<rect x="462.5" y="52.5" width="4" height="7" fill="#bdbdbd"/>
<rect x="478.9" y="49" width="1.2" height="14" fill="#bdbdbd"/>
<rect x="486.9" y="49" width="1.2" height="14" fill="#bdbdbd"/>
<rect x="475" y="51" width="3.5" height="10" fill="#bdbdbd"/>
<rect x="482.3" y="53" width="3.9" height="6" fill="#bdbdbd"/>
<rect x="495" y="47" width="1" height="19" fill="#484848"/>
<text x="501.8" y="59.205" font-size="8.3" fill="#f0f0f0" stroke="#f0f0f0" stroke-width="0.3" font-weight="bold" textLength="34.8" lengthAdjust="spacingAndGlyphs">Transform</text>
<path d="M501.8 61.8 H536.6" stroke="#cfcfcf" stroke-width="0.8" stroke-dasharray="1 0.6"/>
<rect x="710.6" y="51.2" width="4" height="4" fill="#cfcfcf"/>
<rect x="710.6" y="56.8" width="4" height="4" fill="#cfcfcf"/>
<rect x="716.2" y="51.2" width="4" height="4" fill="#cfcfcf"/>
<rect x="716.2" y="56.8" width="4" height="4" fill="#cfcfcf"/>
<rect x="729.8" y="50.6" width="3.2" height="3.2" fill="#cfcfcf"/>
<rect x="729.8" y="54.6" width="3.2" height="3.2" fill="#cfcfcf"/>
<rect x="729.8" y="58.6" width="3.2" height="3.2" fill="#cfcfcf"/>
<path d="M734 53.4 H738 A3 3 0 0 1 738 59.4 H734" fill="none" stroke="#cfcfcf" stroke-width="1.5"/>
<path d="M747.3 54.8 L750 57.3 L752.7 54.8" fill="none" stroke="#6e6e6e" stroke-width="1.1"/>
<rect x="768" y="52.6" width="1.4" height="1.3" fill="#d0d0d0"/>
<rect x="770.4" y="52.6" width="6.8" height="1.3" fill="#d0d0d0"/>
<rect x="768" y="55.7" width="1.4" height="1.3" fill="#d0d0d0"/>
<rect x="770.4" y="55.7" width="6.8" height="1.3" fill="#d0d0d0"/>
<rect x="768" y="58.8" width="1.4" height="1.3" fill="#d0d0d0"/>
<rect x="770.4" y="58.8" width="6.8" height="1.3" fill="#d0d0d0"/>
<path d="M10.6 72.6 L8.2 74.6 L10.6 76.6 Z M13.8 72.6 L11.4 74.6 L13.8 76.6 Z" fill="#d0d0d0"/>
<path d="M782.6 72.6 L780.2 74.6 L782.6 76.6 Z M785.8 72.6 L783.4 74.6 L785.8 76.6 Z" fill="#d0d0d0"/>
<rect x="23" y="82.5" width="15" height="1.5" fill="#484848"/>
<rect x="768" y="82.5" width="16" height="1.5" fill="#484848"/>
<text x="68" y="84.02" font-size="9.2" fill="#a4a4a4" stroke="#a4a4a4" stroke-width="0.3" font-weight="bold" textLength="150.6" lengthAdjust="spacingAndGlyphs">Lake.ai* @ 50% (CMYK/GPU Preview)</text>
<path d="M233 79 L236.8 82.8 M236.8 79 L233 82.8" stroke="#bdbdbd" stroke-width="1.2"/>
<text x="250.8" y="84.02" font-size="9.2" fill="#f2f2f2" stroke="#f2f2f2" stroke-width="0.3" font-weight="bold" textLength="158.2" lengthAdjust="spacingAndGlyphs">Italy.pdf @ 10.09% (RGB/GPU Preview)</text>
<path d="M422.4 79 L426.4 83 M426.4 79 L422.4 83" stroke="#f0f0f0" stroke-width="1.4"/>
<rect x="62" y="634" width="39.5" height="13" fill="#3a3a3a"/>
<text x="66" y="643.47" font-size="8.2" fill="#e8e8e8" stroke="#e8e8e8" stroke-width="0.3" font-weight="normal" textLength="25.5" lengthAdjust="spacingAndGlyphs">10.09%</text>
<rect x="102" y="634" width="15" height="13" fill="#4d4d4d"/>
<path d="M106.8 639.6 L109.4 642.2 L112 639.6" fill="none" stroke="#e8e8e8" stroke-width="1.2"/>
<path d="M124.3 637.6 V643.4" stroke="#6c6c6c" stroke-width="1"/><path d="M129 637.4 L125.4 640.5 L129 643.6 Z" fill="#6c6c6c"/>
<path d="M141.5 637.4 L137.9 640.5 L141.5 643.6 Z" fill="#6c6c6c"/>
<rect x="147" y="634" width="34" height="13" fill="#3a3a3a"/>
<text x="152.6" y="643.47" font-size="8.2" fill="#e8e8e8" stroke="#e8e8e8" stroke-width="0.3" font-weight="normal">1</text>
<rect x="181.5" y="634" width="13" height="13" fill="#4d4d4d"/>
<path d="M184.6 639.6 L187.2 642.2 L189.8 639.6" fill="none" stroke="#e8e8e8" stroke-width="1.2"/>
<path d="M201.8 637.4 L205.4 640.5 L201.8 643.6 Z" fill="#6c6c6c"/>
<path d="M214.6 637.4 L218.2 640.5 L214.6 643.6 Z" fill="#6c6c6c"/><path d="M219.4 637.6 V643.4" stroke="#6c6c6c" stroke-width="1"/>
<text x="290" y="643.34" font-size="8.4" fill="#dcdcdc" stroke="#dcdcdc" stroke-width="0.3" font-weight="normal" textLength="31" lengthAdjust="spacingAndGlyphs">Selection</text>
<rect x="385" y="633" width="1" height="15" fill="#3c3c3c"/>
<path d="M388.2 636.8 L392 640.4 L388.2 644 Z" fill="#d8d8d8"/>
<path d="M405 637.5 L402.4 640.3 L405 643.1" fill="none" stroke="#9a9a9a" stroke-width="1.1"/>
<rect x="398" y="633" width="349" height="13" rx="1.5" fill="#404040"/>
<path d="M405 637.5 L402.4 640.3 L405 643.1" fill="none" stroke="#9a9a9a" stroke-width="1.1"/>
<rect x="580" y="634.6" width="20" height="10" rx="5" fill="#525252"/>
<path d="M738.6 637.5 L741.2 640.3 L738.6 643.1" fill="none" stroke="#9a9a9a" stroke-width="1.1"/>
<rect x="747.5" y="633" width="12.5" height="13" fill="#515151"/>
</g>
<g id="tools" opacity="0.999">
<defs><linearGradient id="tg" x1="0" x2="1" y1="0" y2="0"><stop offset="0" stop-color="#111"/><stop offset="1" stop-color="#d8d8d8"/></linearGradient><linearGradient id="tg2" x1="0" x2="1" y1="0" y2="0"><stop offset="0" stop-color="#fff"/><stop offset="1" stop-color="#111"/></linearGradient></defs>
<rect x="9" y="94.6" width="21" height="17.6" rx="1.5" fill="#323232"/>
<g transform="translate(19.5 103.5)"><path d="M-4.6 -6.6 V6.8 L-1.2 3.4 H5.4 Z" fill="none" stroke="#dadada" stroke-width="1.3" stroke-linejoin="miter"/></g>
<g transform="translate(43.3 103.5)"><path d="M-5 -6.4 V7 L-1.2 3.4 H4.8 Z" fill="#c9c9c9"/></g>
<path d="M53.6 108.3 V111.5 H50.4 Z" fill="#d8d8d8"/>
<g transform="translate(19.5 122.15)"><path d="M-6 6 L2.4 -2.6" stroke="#c9c9c9" stroke-width="1.6" fill="none"/><path d="M-1.6 -6 l0.6 1.4 1.4 0.6 -1.4 0.6 -0.6 1.4 -0.6 -1.4 -1.4 -0.6 1.4 -0.6z M4.4 -6.8 l0.5 1.1 1.1 0.5 -1.1 0.5 -0.5 1.1 -0.5 -1.1 -1.1 -0.5 1.1 -0.5z M5 -1.4 l0.5 1.1 1.1 0.5 -1.1 0.5 -0.5 1.1 -0.5 -1.1 -1.1 -0.5 1.1 -0.5z" fill="#c9c9c9"/></g>
<g transform="translate(43.3 122.15)"><path d="M-1.5 4 C-7 3 -8 -4.5 -1 -5.8 C5 -6.8 8 -2 5.4 0.6 M-3.6 -1.8 C-1.4 -3 0 -1 -1.4 0.4 C-3.2 1.6 -4.4 3.6 -2.4 5.6" fill="none" stroke="#c9c9c9" stroke-width="1.3" stroke-linecap="round" stroke-linejoin="round"/><path d="M0.6 -1.6 V6.4 L2.8 4.2 H6.6 Z" fill="#c9c9c9"/></g>
<g transform="translate(19.5 140.8)"><path d="M-6.4 6.6 L-4.6 -0.6 L0.4 -4.2 L4.6 0 L1 5 Z" fill="#c9c9c9"/><path d="M1.6 -5.2 L3.6 -7 L7.2 -3.4 L5.6 -1.4 Z" fill="#c9c9c9"/><path d="M-6.4 6.6 L-1.6 1.8" stroke="#535353" stroke-width="0.9"/></g>
<g transform="translate(43.3 140.8)"><path d="M-2.4 6.6 L-0.8 -0.4 L3.6 -3.8 L7.4 0 L4.2 4.8 Z" fill="#c9c9c9"/><path d="M4.6 -4.8 L6.4 -6.6 L9.6 -3.4 L8.2 -1.6 Z" fill="#c9c9c9"/><path d="M-7 -6 C-4 -3 -8.5 2 -6.4 5 C-5 6.8 -3.4 5.4 -3 4" fill="none" stroke="#c9c9c9" stroke-width="1.3" stroke-linecap="round" stroke-linejoin="round"/></g>
<path d="M30.2 145.6 V148.8 H27 Z" fill="#d8d8d8"/>
<path d="M53.6 145.6 V148.8 H50.4 Z" fill="#d8d8d8"/>
<g transform="translate(19.5 159.45)"><path d="M-5.4 -5.6 H5.6 V-2.2 H4.4 L4 -3.8 H1.2 V4.2 L3 4.6 V5.6 H-2.8 V4.6 L-1 4.2 V-3.8 H-3.8 L-4.2 -2.2 H-5.4 Z" fill="#c9c9c9"/></g>
<g transform="translate(43.3 159.45)"><path d="M-6 5 L5.6 -5.4" stroke="#c9c9c9" stroke-width="1.5" fill="none"/></g>
<path d="M30.2 164.25 V167.45 H27 Z" fill="#d8d8d8"/>
<path d="M53.6 164.25 V167.45 H50.4 Z" fill="#d8d8d8"/>
<g transform="translate(19.5 178.1)"><rect x="-6.2" y="-5.6" width="12.6" height="11" fill="#6d6d6d" stroke="#c9c9c9" stroke-width="1.3"/></g>
<g transform="translate(43.3 178.1)"><path d="M5.8 -7 L7.2 -5.6 L0.8 2.2 L-1.2 0.4 Z" fill="#c9c9c9"/><path d="M-2 1.2 L0.2 3.2 C-1 5.6 -4 6.2 -6.8 5.8 C-5 4.6 -4.6 2 -2 1.2 Z" fill="#c9c9c9"/></g>
<path d="M30.2 182.9 V186.1 H27 Z" fill="#d8d8d8"/>
<path d="M53.6 182.9 V186.1 H50.4 Z" fill="#d8d8d8"/>
<g transform="translate(19.5 196.75)"><circle cx="-2.6" cy="-0.6" r="4.6" fill="#777" stroke="#c9c9c9" stroke-width="1.3"/><path d="M-1.8 5.4 L6.4 -3.6" stroke="#535353" stroke-width="3.6"/><path d="M-1.2 5.2 L6.2 -3.2" stroke="#c9c9c9" stroke-width="2" stroke-linecap="round"/></g>
<g transform="translate(43.3 196.75)"><path d="M-6.6 -4.6 L3.6 1.6 M-6.6 2 L3.6 -3.6" stroke="#c9c9c9" stroke-width="1.5" fill="none"/><circle cx="4.8" cy="-4.4" r="1.9" fill="none" stroke="#c9c9c9" stroke-width="1.3"/><circle cx="4.8" cy="3.2" r="1.9" fill="none" stroke="#c9c9c9" stroke-width="1.3"/></g>
<path d="M30.2 201.55 V204.75 H27 Z" fill="#d8d8d8"/>
<path d="M53.6 201.55 V204.75 H50.4 Z" fill="#d8d8d8"/>
<g transform="translate(19.5 215.4)"><path d="M-3.6 -4.2 A5.4 5.4 0 1 1 -5.4 2.2" fill="none" stroke="#c9c9c9" stroke-width="1.3" stroke-dasharray="11 0"/><path d="M-5.6 2.2 A5.4 5.4 0 0 0 4 4" fill="none" stroke="#8a8a8a" stroke-width="1"/><path d="M-6.4 -6 L-2 -6.4 L-4.6 -2.4 Z" fill="#c9c9c9"/></g>
<g transform="translate(43.3 215.4)"><rect x="-7" y="-0.4" width="7" height="6.6" fill="none" stroke="#c9c9c9" stroke-width="1.2"/><rect x="-3.4" y="-6" width="10.4" height="9.4" fill="none" stroke="#c9c9c9" stroke-width="1.2"/><path d="M-0.4 0.2 L4.6 -4 M1.8 -4.2 H4.8 V-1.2" fill="none" stroke="#c9c9c9" stroke-width="1.1"/></g>
<path d="M30.2 220.2 V223.4 H27 Z" fill="#d8d8d8"/>
<path d="M53.6 220.2 V223.4 H50.4 Z" fill="#d8d8d8"/>
<g transform="translate(19.5 234.05)"><path d="M-6.4 3.6 C-3 3 -5 -4.4 -2 -5.4 C1 -6 -1 2 2 1.4 C4.6 1 3.8 -2 6 -1.6 C7.6 -1 6.6 4 5 5.6" fill="none" stroke="#c9c9c9" stroke-width="1.9" stroke-linecap="round"/><circle cx="-6" cy="4.4" r="1.1" fill="#c9c9c9"/><circle cx="1.4" cy="5.8" r="1.1" fill="#c9c9c9"/></g>
<g transform="translate(43.3 234.05)"><rect x="-1.8" y="-4.4" width="9.6" height="9.6" fill="none" stroke="#c9c9c9" stroke-width="1.1" stroke-dasharray="1.6 1.2"/><path d="M-7.4 -6.4 V5 L-4.4 2 H0.6 Z" fill="#c9c9c9"/></g>
<path d="M30.2 238.85 V242.05 H27 Z" fill="#d8d8d8"/>
<path d="M53.6 238.85 V242.05 H50.4 Z" fill="#d8d8d8"/>
<g transform="translate(19.5 252.7)"><ellipse cx="-2.6" cy="-2" rx="4.8" ry="3.6" fill="none" stroke="#c9c9c9" stroke-width="1.2"/><ellipse cx="1.8" cy="-3" rx="3.8" ry="3" fill="none" stroke="#c9c9c9" stroke-width="1.2"/><path d="M0.4 -1.2 V7.2 L2.8 4.8 H6.6 Z" fill="#c9c9c9"/></g>
<g transform="translate(43.3 252.7)"><path d="M-7 -6.4 V5.6 L0.6 -0.4 Z M-7 -2.4 L-2.2 -2.6 M-7 1.6 L-2.4 1.9 M-3.4 -3.6 V2.8" fill="none" stroke="#c9c9c9" stroke-width="1.1"/><path d="M-7 5.8 H7 M-4 3.8 H5 M-1.6 1.6 H3" stroke="#9a9a9a" stroke-width="0.9" fill="none"/></g>
<path d="M30.2 257.5 V260.7 H27 Z" fill="#d8d8d8"/>
<path d="M53.6 257.5 V260.7 H50.4 Z" fill="#d8d8d8"/>
<g transform="translate(19.5 271.35)"><rect x="-6.2" y="-5.4" width="12.4" height="10.8" fill="#6a6a6a" stroke="#c9c9c9" stroke-width="1.1"/><path d="M-6.2 -1.6 C-2 -3 2 1 6.2 -1 M-6.2 2.4 C-2 0.6 2 4.4 6.2 2.6 M-2.4 -5.4 C-0.6 -2 -3.6 2 -1.8 5.4 M2.4 -5.4 C4 -2 0.6 2 2.4 5.4" fill="none" stroke="#c9c9c9" stroke-width="0.9"/></g>
<g transform="translate(43.3 271.35)"><rect x="-6.6" y="-5.4" width="13" height="10.8" fill="url(#tg)" stroke="#c9c9c9" stroke-width="1.1"/></g>
<g transform="translate(19.5 290)"><path d="M-6.6 6.8 L-5.8 3.6 L1 -3.2 L3.2 -1 L-3.6 5.8 Z" fill="none" stroke="#c9c9c9" stroke-width="1.2"/><path d="M0.2 -3.6 L3.6 -0.2 L6.4 -3 C7.4 -4.4 5.4 -6.8 3.6 -6.2 Z" fill="#c9c9c9"/></g>
<g transform="translate(43.3 290)"><rect x="-7" y="-6.4" width="5.6" height="5.6" fill="#c9c9c9"/><circle cx="0" cy="-0.6" r="3" fill="#777" stroke="#c9c9c9" stroke-width="1.1"/><circle cx="4" cy="2.8" r="3" fill="#666" stroke="#c9c9c9" stroke-width="1.1"/></g>
<path d="M30.2 294.8 V298 H27 Z" fill="#d8d8d8"/>
<g transform="translate(19.5 308.65)"><rect x="-1" y="-2.6" width="8" height="9.4" rx="1.2" fill="none" stroke="#c9c9c9" stroke-width="1.3"/><rect x="1.4" y="-5.6" width="3.2" height="2.6" fill="#c9c9c9"/><circle cx="3" cy="2.4" r="1.8" fill="none" stroke="#c9c9c9" stroke-width="1"/><path d="M-7 -5.6 h1.3 v1.3 h-1.3z M-4.6 -5.6 h1.3 v1.3 h-1.3z M-2.2 -5.6 h1.3 v1.3 h-1.3z M-7 -3.2 h1.3 v1.3 h-1.3z M-4.6 -3.2 h1.3 v1.3 h-1.3z M-7 -0.8 h1.3 v1.3 h-1.3z" fill="#c9c9c9"/></g>
<g transform="translate(43.3 308.65)"><path d="M-6.8 -6.4 V5.8 H7.2" fill="none" stroke="#c9c9c9" stroke-width="1.2"/><rect x="-4.8" y="0" width="2.4" height="5.4" fill="#c9c9c9"/><rect x="-1.2" y="-5" width="2.4" height="10.4" fill="#c9c9c9"/><rect x="2.4" y="-3" width="2.6" height="8.4" fill="#c9c9c9"/></g>
<path d="M30.2 313.45 V316.65 H27 Z" fill="#d8d8d8"/>
<path d="M53.6 313.45 V316.65 H50.4 Z" fill="#d8d8d8"/>
<g transform="translate(19.5 327.3)"><path d="M-5 -7 V-1 M-8 -4 H-2" stroke="#c9c9c9" stroke-width="1.2" fill="none"/><path d="M-4.4 -3.4 H2.4 L5.8 0 V6.4 H-4.4 Z" fill="#777" stroke="#c9c9c9" stroke-width="1.2"/></g>
<g transform="translate(43.3 327.3)"><path d="M-6.6 6.6 L-0.4 -4.4 L3.6 -7 L6.4 -4.6 L5 -0.6 L-2.2 4.4 Z" fill="#c9c9c9"/><path d="M3.4 -4 L-2.6 3" stroke="#535353" stroke-width="1.1"/></g>
<path d="M30.2 332.1 V335.3 H27 Z" fill="#d8d8d8"/>
<path d="M53.6 332.1 V335.3 H50.4 Z" fill="#d8d8d8"/>
<g transform="translate(19.5 345.95)"><path d="M-6.4 -0.6 C-7.4 -2 -5.6 -3 -4.6 -1.6 L-3.4 0.4 L-4 -5.2 C-4 -6.8 -2.2 -6.8 -2 -5.2 L-1.4 -1.6 L-1 -6.2 C-0.8 -7.8 1 -7.6 1 -6.2 L1.2 -1.6 L2.2 -5.4 C2.6 -6.8 4.2 -6.4 4 -5 L3.4 -0.8 L4.8 -3 C5.6 -4.2 7 -3.4 6.4 -2.2 L4 4 C3.2 6 2 6.8 0 6.8 C-2 6.8 -3.4 6 -4.4 4 Z" fill="#c9c9c9"/></g>
<g transform="translate(43.3 345.95)"><circle cx="-1.6" cy="-1.8" r="4.4" fill="none" stroke="#c9c9c9" stroke-width="1.5"/><path d="M1.8 1.6 L6.4 6.2" stroke="#c9c9c9" stroke-width="2" stroke-linecap="round"/></g>
<path d="M30.2 350.75 V353.95 H27 Z" fill="#d8d8d8"/>
<rect x="8" y="357" width="46" height="1" fill="#4a4a4a"/>
<rect x="22.3" y="375.3" width="27" height="26.6" fill="#535353" stroke="#2e2e2e" stroke-width="1"/>
<rect x="29" y="382" width="13.6" height="13" fill="#535353" stroke="#2e2e2e" stroke-width="1"/>
<rect x="8.6" y="361.6" width="27" height="26.6" fill="#555" stroke="#2e2e2e" stroke-width="1"/>
<text x="21.9" y="379.6" font-size="12" font-weight="bold" fill="#f0f0f0" text-anchor="middle">?</text>
<text x="46.6" y="381.4" font-size="6.5" font-weight="bold" fill="#e0e0e0" text-anchor="middle">?</text>
<text x="25.6" y="401" font-size="6.5" font-weight="bold" fill="#e0e0e0" text-anchor="middle">?</text>
<text x="46.6" y="401" font-size="6.5" font-weight="bold" fill="#e0e0e0" text-anchor="middle">?</text>
<path d="M43.6 364.4 C47.6 364 49.6 366 49.4 369.6" fill="none" stroke="#6e6e6e" stroke-width="1.4"/><path d="M44.6 362.4 L42.4 364.6 L44.8 366.6 Z M47.4 368.6 L49.4 371 L51.4 368.6 Z" fill="#6e6e6e"/>
<rect x="11.4" y="396.4" width="6.2" height="6.2" fill="#222" stroke="#e8e8e8" stroke-width="1.2"/>
<rect x="8.2" y="393.4" width="6" height="6" fill="#fff" stroke="#222" stroke-width="0.8"/>
<rect x="10.6" y="411.6" width="9.4" height="9.2" fill="#fff" stroke="#2e2e2e" stroke-width="0.8"/>
<rect x="25.6" y="411.6" width="9.8" height="9.2" fill="url(#tg2)" stroke="#2e2e2e" stroke-width="0.8"/>
<rect x="39" y="409" width="14.4" height="14.4" rx="1" fill="#303030"/>
<rect x="41.6" y="411.6" width="9.6" height="9.2" fill="#fff"/>
<path d="M42.2 420.4 L50.8 412" stroke="#e02020" stroke-width="1.8"/>
<rect x="9" y="428" width="45" height="13.4" fill="none" stroke="#484848" stroke-width="1"/>
<rect x="9" y="428" width="13.4" height="13.4" fill="#323232"/>
<circle cx="14.5" cy="433.6" r="3" fill="none" stroke="#e0e0e0" stroke-width="1.1"/>
<rect x="15.1" y="434.4" width="4.6" height="4.6" fill="#bdbdbd"/>
<circle cx="30" cy="433.6" r="3" fill="none" stroke="#cfcfcf" stroke-width="1.1"/>
<rect x="30.6" y="434.4" width="4.6" height="4.6" fill="#aaa"/>
<circle cx="45" cy="433.6" r="3" fill="none" stroke="#686868" stroke-width="1.1"/>
<rect x="22.4" y="451.6" width="10.6" height="8.6" fill="#6a6a6a" stroke="#d0d0d0" stroke-width="1.1"/>
<rect x="28.6" y="448" width="11" height="8.6" fill="#777" stroke="#d0d0d0" stroke-width="1.1"/>
<circle cx="27.2" cy="479.2" r="1.1" fill="#d8d8d8"/>
<circle cx="31" cy="479.2" r="1.1" fill="#d8d8d8"/>
<circle cx="34.8" cy="479.2" r="1.1" fill="#d8d8d8"/>
</g>
<g id="panels" opacity="0.999">
<text x="557" y="93.24" font-size="8.4" fill="#b4b4b4" stroke="#b4b4b4" stroke-width="0.3" font-weight="bold" textLength="16.6" lengthAdjust="spacingAndGlyphs">Colo</text>
<text x="581.6" y="93.24" font-size="8.4" fill="#b4b4b4" stroke="#b4b4b4" stroke-width="0.3" font-weight="bold" textLength="17" lengthAdjust="spacingAndGlyphs">Prop</text>
<text x="605.6" y="93.24" font-size="8.4" fill="#b4b4b4" stroke="#b4b4b4" stroke-width="0.3" font-weight="bold" textLength="16.6" lengthAdjust="spacingAndGlyphs">Colo</text>
<text x="629.6" y="93.24" font-size="8.4" fill="#f4f4f4" stroke="#f4f4f4" stroke-width="0.3" font-weight="bold" textLength="22.6" lengthAdjust="spacingAndGlyphs">Layers</text>
<text x="666.5" y="93.24" font-size="8.4" fill="#b4b4b4" stroke="#b4b4b4" stroke-width="0.3" font-weight="bold" textLength="17.5" lengthAdjust="spacingAndGlyphs">Libra</text>
<text x="690.5" y="93.24" font-size="8.4" fill="#b4b4b4" stroke="#b4b4b4" stroke-width="0.3" font-weight="bold" textLength="18.5" lengthAdjust="spacingAndGlyphs">Asset</text>
<rect x="575.2" y="80" width="1" height="20" fill="#404040"/>
<rect x="600" y="80" width="1" height="20" fill="#404040"/>
<rect x="659.5" y="80" width="1" height="20" fill="#404040"/>
<rect x="685" y="80" width="1" height="20" fill="#404040"/>
<rect x="710.5" y="80" width="1" height="20" fill="#404040"/>
<path d="M728.4 88 L731 90.6 L728.4 93.2 M732.6 88 L735.2 90.6 L732.6 93.2" fill="none" stroke="#d8d8d8" stroke-width="1.2"/>
<rect x="741" y="86.6" width="1" height="8.4" fill="#d0d0d0"/>
<rect x="747" y="87.4" width="8.6" height="1.3" fill="#d8d8d8"/>
<rect x="747" y="90.1" width="8.6" height="1.3" fill="#d8d8d8"/>
<rect x="747" y="92.8" width="8.6" height="1.3" fill="#d8d8d8"/>
<rect x="554.5" y="104.5" width="201.5" height="504" fill="#535353" stroke="#5c5c5c" stroke-width="0.8"/>
<rect x="555" y="105.8" width="201" height="25.65" fill="#4a6182"/>
<path d="M751 105.8 H756 V110.8 Z" fill="#f0f0f0"/>
<path d="M557.6 118.425 C559.6 114.225 565.6 114.225 567.6 118.425 C565.6 122.625 559.6 122.625 557.6 118.425 Z" fill="#e6e6e6"/><circle cx="562.6" cy="118.425" r="2.2" fill="#6b7480"/><circle cx="562.6" cy="118.425" r="1" fill="#e6e6e6"/>
<rect x="587.8" y="105.8" width="2.6" height="25.65" fill="#5b80ea"/>
<path d="M598 117.225 L601 120.225 L604 117.225" fill="none" stroke="#f0f0f0" stroke-width="1.4"/>
<rect x="611.6" y="107.2" width="23" height="23.4" fill="#fff" stroke="#1c1c1c" stroke-width="1"/><g transform="translate(613.9 108.1) scale(0.041) translate(-86 -96)"><polygon fill="#BC98D2" points="162,150 171,158 180,144 186,129 194,135 208,135 218,138 218,123 232,129 235,143 231,160 238,171 240,185 250,203 262,212 240,212 217,210 196,205 185,214 181,229 177,219 163,211 156,197 166,188 162,175 160,163"/><polygon fill="#D8D23E" points="190,206 210,208 232,213 255,213 278,212 300,215 297,226 299,244 308,257 306,267 296,275 284,270 277,258 264,252 246,257 231,251 213,242 198,238 186,226 187,209"/><polygon fill="#48A5A1" points="303,118 313,125 305,139 305,150 309,162 320,164 328,172 316,179 303,186 298,199 306,210 303,219 287,213 262,212 250,203 240,185 238,171 248,164 255,170 277,138 294,117"/><polygon fill="#FACC70" points="228,113 246,111 258,105 269,102 290,97 294,106 303,118 290,121 281,132 285,145 273,153 260,162 250,171 244,163 233,164 234,149 235,133 227,119"/><polygon fill="#F391CB" points="316,122 337,126 352,130 342,140 350,147 348,157 349,166 359,177 350,172 340,173 334,170 324,166 312,164 304,155 302,142 312,130"/><polygon fill="#F8A8D8" points="125,260 119,272 137,270 140,262 152,250 167,240 184,245 202,255 215,258 204,246 193,235 181,229 169,231 156,236 143,246 132,256"/><polygon fill="#F87E5E" points="133,162 142,147 145,137 155,138 163,154 160,163 162,175 166,188 156,197 163,211 177,219 181,229 169,231 156,236 143,246 132,256 123,256 106,251 94,232 95,210 90,201 105,187 115,180 133,177"/><polygon fill="#F7F282" points="92,166 116,160 133,162 133,177 115,180 100,180"/><polygon fill="#5EBC42" points="204,241 219,245 235,254 252,258 269,252 276,262 287,273 300,274 297,280 291,294 288,306 285,322 274,333 264,344 257,341 245,327 235,316 231,301 223,283 218,265 207,250"/><polygon fill="#F7F282" points="300,280 311,288 319,300 324,314 332,322 332,332 320,337 310,345 301,340 288,331 286,316 291,303 292,289"/><polygon fill="#BC98D2" points="308,258 322,267 335,278 349,288 356,309 356,322 340,328 328,321 322,309 317,295 307,286 301,276 306,267"/><polygon fill="#F391CB" points="257,342 268,343 277,328 285,325 296,338 307,344 316,339 328,334 335,325 338,336 335,347 335,356 330,362 341,371 355,377 362,389 356,400 346,402 327,404 314,393 302,380 290,366 274,350"/><polygon fill="#F87E5E" points="360,321 370,338 388,359 387,369 376,373 367,377 355,377 341,371 330,362 335,356 335,347 338,336 344,325"/><polygon fill="#48A5A1" points="391,364 404,369 404,380 402,392 391,395 377,393 365,395 363,385 370,374 380,374 389,365"/><polygon fill="#D8D23E" points="358,395 368,393 382,395 395,394 404,400 414,410 420,417 415,429 422,442 428,454 418,464 402,457 399,447 394,432 380,437 374,435 377,427 363,421 358,408"/><polygon fill="#F7F282" points="420,413 435,411 446,423 462,430 468,442 460,456 453,464 441,467 430,466 426,459 426,447 417,433 416,420"/><polygon fill="#5EBC42" points="407,371 426,368 443,369 441,380 437,391 455,402 477,412 500,427 520,441 533,459 526,474 514,465 505,454 488,447 474,439 465,433 450,426 438,414 424,410 414,410 404,400 402,392 404,380"/><polygon fill="#F87E5E" points="428,464 437,465 450,467 461,459 457,473 462,483 476,490 481,503 481,515 467,521 459,530 456,544 445,555 435,564 426,556 432,542 432,532 441,526 444,515 438,500 433,482"/><polygon fill="#F391CB" points="302,570 310,558 322,560 335,553 347,559 365,560 382,557 399,553 418,549 418,560 407,574 401,588 409,601 407,613 401,625 386,618 372,608 356,602 342,594 328,586 314,579 304,572"/><polygon fill="#FACC70" points="180,404 193,405 201,422 205,439 200,458 201,476 199,498 192,508 179,504 173,516 161,518 152,505 152,488 157,474 155,458 150,441 142,430 145,415 148,415 164,420 177,408"/><polygon fill="#5EBC42" points="216,326 227,322 221,328"/></g>
<text x="638.6" y="123.27" font-size="8.7" fill="#f0f0f0" stroke="#f0f0f0" stroke-width="0.3" font-weight="normal" textLength="25.2" lengthAdjust="spacingAndGlyphs">Layer 1</text>
<circle cx="735.4" cy="118.625" r="3" fill="none" stroke="#dcdcdc" stroke-width="1.2"/>
<rect x="744" y="116.125" width="5" height="5" fill="#4f78ea" stroke="#2f4070" stroke-width="0.8"/>
<rect x="555" y="131.05" width="201" height="0.8" fill="#494949"/>
<rect x="587.8" y="131.45" width="2.6" height="25.65" fill="#5b80ea"/>
<path d="M615.6 141.275 L618.6 144.275 L615.6 147.275" fill="none" stroke="#f0f0f0" stroke-width="1.4"/>
<rect x="629.6" y="132.85" width="23" height="23.4" fill="#fff" stroke="#1c1c1c" stroke-width="1"/><g transform="translate(631.9 133.75) scale(0.041) translate(-86 -96)" fill="#777"><circle cx="111" cy="168" r="9"/><circle cx="160" cy="184" r="9"/><circle cx="178" cy="165" r="9"/><circle cx="159" cy="213" r="9"/><circle cx="220" cy="180" r="9"/><circle cx="254" cy="152" r="9"/><circle cx="269" cy="180" r="9"/><circle cx="355" cy="177" r="9"/><circle cx="282" cy="188" r="9"/><circle cx="224" cy="220" r="9"/><circle cx="262" cy="236" r="9"/><circle cx="294" cy="239" r="9"/><circle cx="258" cy="274" r="9"/><circle cx="223" cy="285" r="9"/><circle cx="291" cy="343" r="9"/><circle cx="280" cy="359" r="9"/><circle cx="356" cy="310" r="9"/><circle cx="340" cy="345" r="9"/><circle cx="305" cy="370" r="9"/><circle cx="321" cy="390" r="9"/><circle cx="388" cy="358" r="9"/><circle cx="448" cy="398" r="9"/><circle cx="403" cy="420" r="9"/><circle cx="392" cy="430" r="9"/><circle cx="430" cy="432" r="9"/><circle cx="469" cy="409" r="9"/><circle cx="519" cy="446" r="9"/><circle cx="485" cy="440" r="9"/><circle cx="449" cy="511" r="9"/><circle cx="460" cy="521" r="9"/><circle cx="421" cy="550" r="9"/><circle cx="307" cy="560" r="9"/><circle cx="309" cy="583" r="9"/><circle cx="362" cy="559" r="9"/><circle cx="389" cy="611" r="9"/><circle cx="403" cy="583" r="9"/><circle cx="156" cy="427" r="9"/><circle cx="186" cy="447" r="9"/><circle cx="178" cy="501" r="9"/><circle cx="127" cy="269" r="9"/></g>
<text x="656.2" y="148.92" font-size="8.7" fill="#ececec" stroke="#ececec" stroke-width="0.3" font-weight="normal" textLength="38.6" lengthAdjust="spacingAndGlyphs">States Text</text>
<circle cx="735.4" cy="144.275" r="3" fill="none" stroke="#dcdcdc" stroke-width="1.2"/>
<rect x="555" y="156.7" width="201" height="0.8" fill="#494949"/>
<path d="M557.6 169.725 C559.6 165.525 565.6 165.525 567.6 169.725 C565.6 173.925 559.6 173.925 557.6 169.725 Z" fill="#e6e6e6"/><circle cx="562.6" cy="169.725" r="2.2" fill="#6b7480"/><circle cx="562.6" cy="169.725" r="1" fill="#e6e6e6"/>
<rect x="587.8" y="157.1" width="2.6" height="25.65" fill="#5b80ea"/>
<path d="M615.6 166.925 L618.6 169.925 L615.6 172.925" fill="none" stroke="#f0f0f0" stroke-width="1.4"/>
<rect x="629.6" y="158.5" width="23" height="23.4" fill="#fff" stroke="#1c1c1c" stroke-width="1"/><g transform="translate(631.9 159.4) scale(0.041) translate(-86 -96)" fill="#777"><circle cx="111" cy="168" r="9"/><circle cx="160" cy="184" r="9"/><circle cx="178" cy="165" r="9"/><circle cx="159" cy="213" r="9"/><circle cx="220" cy="180" r="9"/><circle cx="254" cy="152" r="9"/><circle cx="269" cy="180" r="9"/><circle cx="355" cy="177" r="9"/><circle cx="282" cy="188" r="9"/><circle cx="224" cy="220" r="9"/><circle cx="262" cy="236" r="9"/><circle cx="294" cy="239" r="9"/><circle cx="258" cy="274" r="9"/><circle cx="223" cy="285" r="9"/><circle cx="291" cy="343" r="9"/><circle cx="280" cy="359" r="9"/><circle cx="356" cy="310" r="9"/><circle cx="340" cy="345" r="9"/><circle cx="305" cy="370" r="9"/><circle cx="321" cy="390" r="9"/><circle cx="388" cy="358" r="9"/><circle cx="448" cy="398" r="9"/><circle cx="403" cy="420" r="9"/><circle cx="392" cy="430" r="9"/><circle cx="430" cy="432" r="9"/><circle cx="469" cy="409" r="9"/><circle cx="519" cy="446" r="9"/><circle cx="485" cy="440" r="9"/><circle cx="449" cy="511" r="9"/><circle cx="460" cy="521" r="9"/><circle cx="421" cy="550" r="9"/><circle cx="307" cy="560" r="9"/><circle cx="309" cy="583" r="9"/><circle cx="362" cy="559" r="9"/><circle cx="389" cy="611" r="9"/><circle cx="403" cy="583" r="9"/><circle cx="156" cy="427" r="9"/><circle cx="186" cy="447" r="9"/><circle cx="178" cy="501" r="9"/><circle cx="127" cy="269" r="9"/></g>
<text x="656.2" y="174.57" font-size="8.7" fill="#ececec" stroke="#ececec" stroke-width="0.3" font-weight="normal" textLength="19" lengthAdjust="spacingAndGlyphs">Cities</text>
<circle cx="735.4" cy="169.925" r="4.2" fill="#3c3c3c" stroke="#a6a6a6" stroke-width="2.1"/><circle cx="735.4" cy="169.925" r="1.9" fill="none" stroke="#d8d8d8" stroke-width="1"/>
<rect x="744" y="167.425" width="5" height="5" fill="#4f78ea" stroke="#2f4070" stroke-width="0.8"/>
<rect x="555" y="182.35" width="201" height="0.8" fill="#494949"/>
<rect x="587.8" y="182.75" width="2.6" height="25.65" fill="#5b80ea"/>
<path d="M615.6 192.575 L618.6 195.575 L615.6 198.575" fill="none" stroke="#f0f0f0" stroke-width="1.4"/>
<rect x="629.6" y="184.15" width="23" height="23.4" fill="#fff" stroke="#1c1c1c" stroke-width="1"/><g transform="translate(631.9 185.05) scale(0.041) translate(-86 -96)" fill="none" stroke="#8a8a8a" stroke-width="9"><polyline points="125,204 104,204 87,205"/><polyline points="125,204 140,191 160,184 181,183"/><polyline points="125,204 128,218 128,235 123,251"/><polyline points="139,177 154,183"/><polyline points="160,184 159,202"/><polyline points="181,183 195,171"/><polyline points="181,183 192,202"/><polyline points="181,183 168,171 163,159"/><polyline points="97,164 110,169 125,171 131,180 128,196"/><polyline points="128,226 146,223 159,213"/><polyline points="110,239 123,251"/><polyline points="177,180 184,178 184,188 177,183"/><polyline points="275,114 270,124 261,134 256,146 253,157 250,166 247,177"/><polyline points="213,166 213,177"/><polyline points="250,184 250,201 247,219"/><polyline points="269,180 258,192"/><polyline points="303,182 318,170 330,167 342,164 353,172"/><polyline points="303,182 286,186"/><polyline points="303,182 292,195 282,207"/><polyline points="190,199 213,212 235,224 253,231 272,239 296,251"/><polyline points="262,236 272,217 278,199"/><polyline points="246,227 244,203 246,185"/><polyline points="224,220 226,208"/><polyline points="294,239 297,224 299,209"/><polyline points="201,205 216,194"/><polyline points="258,273 241,273 227,276"/><polyline points="258,273 275,277"/><polyline points="282,188 296,191"/><polyline points="258,274 270,286 279,295 283,307 289,316 292,333"/><polyline points="223,285 229,298 232,313 245,321 256,331 263,345 280,359"/><polyline points="223,285 241,280 258,274"/><polyline points="304,309 316,300"/><polyline points="291,343 306,339"/><polyline points="226,276"/><polyline points="305,277 317,277"/><polyline points="319,300 331,295"/><polyline points="340,328 346,320 358,315"/><polyline points="305,370 308,357 306,345 311,336"/><polyline points="305,370 288,362"/><polyline points="328,359 346,357 361,353 370,341"/><polyline points="305,370 315,384"/><polyline points="321,390 335,398 352,401"/><polyline points="370,341 382,354"/><polyline points="377,350 395,364 410,373 418,385 429,395 448,398 470,408"/><polyline points="421,391 435,404 448,398"/><polyline points="392,407 400,415"/><polyline points="358,395 365,406 373,420"/><polyline points="413,435 430,432 444,436 456,442 470,443"/><polyline points="403,420 392,430"/><polyline points="407,371 416,385"/><polyline points="469,409 485,418 500,427"/><polyline points="511,433 519,446 512,460"/><polyline points="517,453"/><polyline points="420,405 435,402 447,399"/><polyline points="420,436 426,447 426,459"/><polyline points="471,442 465,451 461,459"/><polyline points="446,465 447,478 447,491 447,505 450,517 444,529 437,540 431,549"/><polyline points="447,491 461,499 475,506"/><polyline points="480,507 478,518"/><polyline points="434,527 443,527"/><polyline points="337,554 354,561 365,577 378,581 395,585"/><polyline points="321,567 307,560"/><polyline points="403,583 406,598"/><polyline points="389,611 371,606 354,599"/><polyline points="410,604 405,618 393,618"/><polyline points="354,561 374,559 397,554 421,550"/><polyline points="156,427 166,440 168,458 158,467 164,481 175,492"/><polyline points="193,417 202,434 192,445 178,452 162,464"/><polyline points="178,501 160,498"/><polyline points="181,182 202,183 219,180"/><polyline points="181,182 171,191"/><polyline points="163,165 167,175"/><polyline points="188,165 181,182"/><polyline points="270,179 267,170"/><polyline points="267,171 288,168"/><polyline points="298,199 296,215"/></g>
<text x="656.2" y="200.22" font-size="8.7" fill="#ececec" stroke="#ececec" stroke-width="0.3" font-weight="normal" textLength="47" lengthAdjust="spacingAndGlyphs">Border States</text>
<circle cx="735.4" cy="195.575" r="3" fill="none" stroke="#dcdcdc" stroke-width="1.2"/>
<rect x="555" y="208" width="201" height="0.8" fill="#494949"/>
<path d="M557.6 221.025 C559.6 216.825 565.6 216.825 567.6 221.025 C565.6 225.225 559.6 225.225 557.6 221.025 Z" fill="#e6e6e6"/><circle cx="562.6" cy="221.025" r="2.2" fill="#6b7480"/><circle cx="562.6" cy="221.025" r="1" fill="#e6e6e6"/>
<rect x="587.8" y="208.4" width="2.6" height="25.65" fill="#5b80ea"/>
<path d="M615.6 218.225 L618.6 221.225 L615.6 224.225" fill="none" stroke="#f0f0f0" stroke-width="1.4"/>
<rect x="629.6" y="209.8" width="23" height="23.4" fill="#fff" stroke="#1c1c1c" stroke-width="1"/><g transform="translate(631.9 210.7) scale(0.041) translate(-86 -96)" fill="none" stroke="#8a8a8a" stroke-width="9"><polyline points="125,204 104,204 87,205"/><polyline points="125,204 140,191 160,184 181,183"/><polyline points="125,204 128,218 128,235 123,251"/><polyline points="139,177 154,183"/><polyline points="160,184 159,202"/><polyline points="181,183 195,171"/><polyline points="181,183 192,202"/><polyline points="181,183 168,171 163,159"/><polyline points="97,164 110,169 125,171 131,180 128,196"/><polyline points="128,226 146,223 159,213"/><polyline points="110,239 123,251"/><polyline points="177,180 184,178 184,188 177,183"/><polyline points="275,114 270,124 261,134 256,146 253,157 250,166 247,177"/><polyline points="213,166 213,177"/><polyline points="250,184 250,201 247,219"/><polyline points="269,180 258,192"/><polyline points="303,182 318,170 330,167 342,164 353,172"/><polyline points="303,182 286,186"/><polyline points="303,182 292,195 282,207"/><polyline points="190,199 213,212 235,224 253,231 272,239 296,251"/><polyline points="262,236 272,217 278,199"/><polyline points="246,227 244,203 246,185"/><polyline points="224,220 226,208"/><polyline points="294,239 297,224 299,209"/><polyline points="201,205 216,194"/><polyline points="258,273 241,273 227,276"/><polyline points="258,273 275,277"/><polyline points="282,188 296,191"/><polyline points="258,274 270,286 279,295 283,307 289,316 292,333"/><polyline points="223,285 229,298 232,313 245,321 256,331 263,345 280,359"/><polyline points="223,285 241,280 258,274"/><polyline points="304,309 316,300"/><polyline points="291,343 306,339"/><polyline points="226,276"/><polyline points="305,277 317,277"/><polyline points="319,300 331,295"/><polyline points="340,328 346,320 358,315"/><polyline points="305,370 308,357 306,345 311,336"/><polyline points="305,370 288,362"/><polyline points="328,359 346,357 361,353 370,341"/><polyline points="305,370 315,384"/><polyline points="321,390 335,398 352,401"/><polyline points="370,341 382,354"/><polyline points="377,350 395,364 410,373 418,385 429,395 448,398 470,408"/><polyline points="421,391 435,404 448,398"/><polyline points="392,407 400,415"/><polyline points="358,395 365,406 373,420"/><polyline points="413,435 430,432 444,436 456,442 470,443"/><polyline points="403,420 392,430"/><polyline points="407,371 416,385"/><polyline points="469,409 485,418 500,427"/><polyline points="511,433 519,446 512,460"/><polyline points="517,453"/><polyline points="420,405 435,402 447,399"/><polyline points="420,436 426,447 426,459"/><polyline points="471,442 465,451 461,459"/><polyline points="446,465 447,478 447,491 447,505 450,517 444,529 437,540 431,549"/><polyline points="447,491 461,499 475,506"/><polyline points="480,507 478,518"/><polyline points="434,527 443,527"/><polyline points="337,554 354,561 365,577 378,581 395,585"/><polyline points="321,567 307,560"/><polyline points="403,583 406,598"/><polyline points="389,611 371,606 354,599"/><polyline points="410,604 405,618 393,618"/><polyline points="354,561 374,559 397,554 421,550"/><polyline points="156,427 166,440 168,458 158,467 164,481 175,492"/><polyline points="193,417 202,434 192,445 178,452 162,464"/><polyline points="178,501 160,498"/><polyline points="181,182 202,183 219,180"/><polyline points="181,182 171,191"/><polyline points="163,165 167,175"/><polyline points="188,165 181,182"/><polyline points="270,179 267,170"/><polyline points="267,171 288,168"/><polyline points="298,199 296,215"/></g>
<text x="656.2" y="225.87" font-size="8.7" fill="#ececec" stroke="#ececec" stroke-width="0.3" font-weight="normal" textLength="42" lengthAdjust="spacingAndGlyphs">Mean Roads</text>
<circle cx="735.4" cy="221.225" r="4.2" fill="#3c3c3c" stroke="#a6a6a6" stroke-width="2.1"/><circle cx="735.4" cy="221.225" r="1.9" fill="none" stroke="#d8d8d8" stroke-width="1"/>
<rect x="744" y="218.725" width="5" height="5" fill="#4f78ea" stroke="#2f4070" stroke-width="0.8"/>
<rect x="555" y="233.65" width="201" height="0.8" fill="#494949"/>
<path d="M557.6 246.675 C559.6 242.475 565.6 242.475 567.6 246.675 C565.6 250.875 559.6 250.875 557.6 246.675 Z" fill="#e6e6e6"/><circle cx="562.6" cy="246.675" r="2.2" fill="#6b7480"/><circle cx="562.6" cy="246.675" r="1" fill="#e6e6e6"/>
<rect x="587.8" y="234.05" width="2.6" height="25.65" fill="#5b80ea"/>
<path d="M615.6 243.875 L618.6 246.875 L615.6 249.875" fill="none" stroke="#f0f0f0" stroke-width="1.4"/>
<rect x="629.6" y="235.45" width="23" height="23.4" fill="#fff" stroke="#1c1c1c" stroke-width="1"/>
<text x="656.2" y="251.52" font-size="8.7" fill="#ececec" stroke="#ececec" stroke-width="0.3" font-weight="normal" textLength="16.4" lengthAdjust="spacingAndGlyphs">Lake</text>
<circle cx="735.4" cy="246.875" r="4.2" fill="#3c3c3c" stroke="#a6a6a6" stroke-width="2.1"/><circle cx="735.4" cy="246.875" r="1.9" fill="none" stroke="#d8d8d8" stroke-width="1"/>
<rect x="744" y="244.375" width="5" height="5" fill="#4f78ea" stroke="#2f4070" stroke-width="0.8"/>
<rect x="555" y="259.3" width="201" height="0.8" fill="#494949"/>
<path d="M557.6 272.325 C559.6 268.125 565.6 268.125 567.6 272.325 C565.6 276.525 559.6 276.525 557.6 272.325 Z" fill="#e6e6e6"/><circle cx="562.6" cy="272.325" r="2.2" fill="#6b7480"/><circle cx="562.6" cy="272.325" r="1" fill="#e6e6e6"/>
<rect x="587.8" y="259.7" width="2.6" height="25.65" fill="#5b80ea"/>
<path d="M615.6 269.525 L618.6 272.525 L615.6 275.525" fill="none" stroke="#f0f0f0" stroke-width="1.4"/>
<rect x="629.6" y="261.1" width="23" height="23.4" fill="#fff" stroke="#1c1c1c" stroke-width="1"/><g transform="translate(631.9 262) scale(0.041) translate(-86 -96)"><polygon fill="#BC98D2" points="162,150 171,158 180,144 186,129 194,135 208,135 218,138 218,123 232,129 235,143 231,160 238,171 240,185 250,203 262,212 240,212 217,210 196,205 185,214 181,229 177,219 163,211 156,197 166,188 162,175 160,163"/><polygon fill="#D8D23E" points="190,206 210,208 232,213 255,213 278,212 300,215 297,226 299,244 308,257 306,267 296,275 284,270 277,258 264,252 246,257 231,251 213,242 198,238 186,226 187,209"/><polygon fill="#48A5A1" points="303,118 313,125 305,139 305,150 309,162 320,164 328,172 316,179 303,186 298,199 306,210 303,219 287,213 262,212 250,203 240,185 238,171 248,164 255,170 277,138 294,117"/><polygon fill="#FACC70" points="228,113 246,111 258,105 269,102 290,97 294,106 303,118 290,121 281,132 285,145 273,153 260,162 250,171 244,163 233,164 234,149 235,133 227,119"/><polygon fill="#F391CB" points="316,122 337,126 352,130 342,140 350,147 348,157 349,166 359,177 350,172 340,173 334,170 324,166 312,164 304,155 302,142 312,130"/><polygon fill="#F8A8D8" points="125,260 119,272 137,270 140,262 152,250 167,240 184,245 202,255 215,258 204,246 193,235 181,229 169,231 156,236 143,246 132,256"/><polygon fill="#F87E5E" points="133,162 142,147 145,137 155,138 163,154 160,163 162,175 166,188 156,197 163,211 177,219 181,229 169,231 156,236 143,246 132,256 123,256 106,251 94,232 95,210 90,201 105,187 115,180 133,177"/><polygon fill="#F7F282" points="92,166 116,160 133,162 133,177 115,180 100,180"/><polygon fill="#5EBC42" points="204,241 219,245 235,254 252,258 269,252 276,262 287,273 300,274 297,280 291,294 288,306 285,322 274,333 264,344 257,341 245,327 235,316 231,301 223,283 218,265 207,250"/><polygon fill="#F7F282" points="300,280 311,288 319,300 324,314 332,322 332,332 320,337 310,345 301,340 288,331 286,316 291,303 292,289"/><polygon fill="#BC98D2" points="308,258 322,267 335,278 349,288 356,309 356,322 340,328 328,321 322,309 317,295 307,286 301,276 306,267"/><polygon fill="#F391CB" points="257,342 268,343 277,328 285,325 296,338 307,344 316,339 328,334 335,325 338,336 335,347 335,356 330,362 341,371 355,377 362,389 356,400 346,402 327,404 314,393 302,380 290,366 274,350"/><polygon fill="#F87E5E" points="360,321 370,338 388,359 387,369 376,373 367,377 355,377 341,371 330,362 335,356 335,347 338,336 344,325"/><polygon fill="#48A5A1" points="391,364 404,369 404,380 402,392 391,395 377,393 365,395 363,385 370,374 380,374 389,365"/><polygon fill="#D8D23E" points="358,395 368,393 382,395 395,394 404,400 414,410 420,417 415,429 422,442 428,454 418,464 402,457 399,447 394,432 380,437 374,435 377,427 363,421 358,408"/><polygon fill="#F7F282" points="420,413 435,411 446,423 462,430 468,442 460,456 453,464 441,467 430,466 426,459 426,447 417,433 416,420"/><polygon fill="#5EBC42" points="407,371 426,368 443,369 441,380 437,391 455,402 477,412 500,427 520,441 533,459 526,474 514,465 505,454 488,447 474,439 465,433 450,426 438,414 424,410 414,410 404,400 402,392 404,380"/><polygon fill="#F87E5E" points="428,464 437,465 450,467 461,459 457,473 462,483 476,490 481,503 481,515 467,521 459,530 456,544 445,555 435,564 426,556 432,542 432,532 441,526 444,515 438,500 433,482"/><polygon fill="#F391CB" points="302,570 310,558 322,560 335,553 347,559 365,560 382,557 399,553 418,549 418,560 407,574 401,588 409,601 407,613 401,625 386,618 372,608 356,602 342,594 328,586 314,579 304,572"/><polygon fill="#FACC70" points="180,404 193,405 201,422 205,439 200,458 201,476 199,498 192,508 179,504 173,516 161,518 152,505 152,488 157,474 155,458 150,441 142,430 145,415 148,415 164,420 177,408"/><polygon fill="#5EBC42" points="216,326 227,322 221,328"/></g>
<text x="656.2" y="277.17" font-size="8.7" fill="#ececec" stroke="#ececec" stroke-width="0.3" font-weight="normal" textLength="22.4" lengthAdjust="spacingAndGlyphs">States</text>
<circle cx="735.4" cy="272.525" r="4.2" fill="#3c3c3c" stroke="#a6a6a6" stroke-width="2.1"/><circle cx="735.4" cy="272.525" r="1.9" fill="none" stroke="#d8d8d8" stroke-width="1"/>
<rect x="744" y="270.025" width="5" height="5" fill="#4f78ea" stroke="#2f4070" stroke-width="0.8"/>
<rect x="555" y="284.95" width="201" height="0.8" fill="#494949"/>
<rect x="587.8" y="285.35" width="2.6" height="25.65" fill="#5b80ea"/>
<path d="M615.6 295.175 L618.6 298.175 L615.6 301.175" fill="none" stroke="#f0f0f0" stroke-width="1.4"/>
<rect x="629.6" y="286.75" width="23" height="23.4" fill="#fff" stroke="#1c1c1c" stroke-width="1"/><g transform="translate(631.9 287.65) scale(0.041) translate(-86 -96)" fill="#1a1a1a" stroke="#1a1a1a" stroke-width="10"><polygon points="162,150 171,158 180,144 186,129 194,135 208,135 218,138 218,123 232,129 235,143 231,160 238,171 240,185 250,203 262,212 240,212 217,210 196,205 185,214 181,229 177,219 163,211 156,197 166,188 162,175 160,163"/><polygon points="190,206 210,208 232,213 255,213 278,212 300,215 297,226 299,244 308,257 306,267 296,275 284,270 277,258 264,252 246,257 231,251 213,242 198,238 186,226 187,209"/><polygon points="303,118 313,125 305,139 305,150 309,162 320,164 328,172 316,179 303,186 298,199 306,210 303,219 287,213 262,212 250,203 240,185 238,171 248,164 255,170 277,138 294,117"/><polygon points="228,113 246,111 258,105 269,102 290,97 294,106 303,118 290,121 281,132 285,145 273,153 260,162 250,171 244,163 233,164 234,149 235,133 227,119"/><polygon points="316,122 337,126 352,130 342,140 350,147 348,157 349,166 359,177 350,172 340,173 334,170 324,166 312,164 304,155 302,142 312,130"/><polygon points="125,260 119,272 137,270 140,262 152,250 167,240 184,245 202,255 215,258 204,246 193,235 181,229 169,231 156,236 143,246 132,256"/><polygon points="133,162 142,147 145,137 155,138 163,154 160,163 162,175 166,188 156,197 163,211 177,219 181,229 169,231 156,236 143,246 132,256 123,256 106,251 94,232 95,210 90,201 105,187 115,180 133,177"/><polygon points="92,166 116,160 133,162 133,177 115,180 100,180"/><polygon points="204,241 219,245 235,254 252,258 269,252 276,262 287,273 300,274 297,280 291,294 288,306 285,322 274,333 264,344 257,341 245,327 235,316 231,301 223,283 218,265 207,250"/><polygon points="300,280 311,288 319,300 324,314 332,322 332,332 320,337 310,345 301,340 288,331 286,316 291,303 292,289"/><polygon points="308,258 322,267 335,278 349,288 356,309 356,322 340,328 328,321 322,309 317,295 307,286 301,276 306,267"/><polygon points="257,342 268,343 277,328 285,325 296,338 307,344 316,339 328,334 335,325 338,336 335,347 335,356 330,362 341,371 355,377 362,389 356,400 346,402 327,404 314,393 302,380 290,366 274,350"/><polygon points="360,321 370,338 388,359 387,369 376,373 367,377 355,377 341,371 330,362 335,356 335,347 338,336 344,325"/><polygon points="391,364 404,369 404,380 402,392 391,395 377,393 365,395 363,385 370,374 380,374 389,365"/><polygon points="358,395 368,393 382,395 395,394 404,400 414,410 420,417 415,429 422,442 428,454 418,464 402,457 399,447 394,432 380,437 374,435 377,427 363,421 358,408"/><polygon points="420,413 435,411 446,423 462,430 468,442 460,456 453,464 441,467 430,466 426,459 426,447 417,433 416,420"/><polygon points="407,371 426,368 443,369 441,380 437,391 455,402 477,412 500,427 520,441 533,459 526,474 514,465 505,454 488,447 474,439 465,433 450,426 438,414 424,410 414,410 404,400 402,392 404,380"/><polygon points="428,464 437,465 450,467 461,459 457,473 462,483 476,490 481,503 481,515 467,521 459,530 456,544 445,555 435,564 426,556 432,542 432,532 441,526 444,515 438,500 433,482"/><polygon points="302,570 310,558 322,560 335,553 347,559 365,560 382,557 399,553 418,549 418,560 407,574 401,588 409,601 407,613 401,625 386,618 372,608 356,602 342,594 328,586 314,579 304,572"/><polygon points="180,404 193,405 201,422 205,439 200,458 201,476 199,498 192,508 179,504 173,516 161,518 152,505 152,488 157,474 155,458 150,441 142,430 145,415 148,415 164,420 177,408"/><polygon points="216,326 227,322 221,328"/></g>
<text x="656.2" y="302.82" font-size="8.7" fill="#ececec" stroke="#ececec" stroke-width="0.3" font-weight="normal" textLength="32" lengthAdjust="spacingAndGlyphs">&lt;Group&gt;</text>
<circle cx="735.4" cy="298.175" r="3" fill="none" stroke="#dcdcdc" stroke-width="1.2"/>
<rect x="555" y="310.6" width="201" height="0.8" fill="#494949"/>
<rect x="571.4" y="105.8" width="0.8" height="205.2" fill="#494949"/>
<rect x="586.4" y="105.8" width="0.8" height="205.2" fill="#494949"/>
<rect x="727" y="105.8" width="0.9" height="205.2" fill="#454545"/>
<text x="554.2" y="619.67" font-size="8.2" fill="#e0e0e0" stroke="#e0e0e0" stroke-width="0.3" font-weight="normal" textLength="25.8" lengthAdjust="spacingAndGlyphs">1 Layer</text>
<path d="M632.6 613 H628.6 V621 H636.6 V617.4" fill="none" stroke="#d8d8d8" stroke-width="1.2"/><path d="M632.4 617 L637.4 612 M634 611.6 H637.6 V615.4" fill="none" stroke="#d8d8d8" stroke-width="1.2"/>
<circle cx="651.6" cy="615.4" r="3.1" fill="none" stroke="#d8d8d8" stroke-width="1.2"/><path d="M654 617.8 L657.6 621.4" stroke="#d8d8d8" stroke-width="1.6"/>
<rect x="668.4" y="612" width="7" height="7" fill="none" stroke="#d8d8d8" stroke-width="1.2"/><rect x="671.4" y="615" width="5.4" height="5.4" fill="#d8d8d8"/>
<path d="M686.6 611.6 V614.6 H689.4" fill="none" stroke="#d8d8d8" stroke-width="1.2"/><rect x="691" y="612.6" width="8" height="8" fill="none" stroke="#d8d8d8" stroke-width="1.2"/><path d="M695 614.6 V618.6 M693 616.6 H697" fill="none" stroke="#d8d8d8" stroke-width="1.2"/>
<rect x="709.6" y="612" width="8.6" height="8.8" fill="none" stroke="#d8d8d8" stroke-width="1.2"/><path d="M713.9 614.2 V618.6 M711.7 616.4 H716.1" fill="none" stroke="#d8d8d8" stroke-width="1.2"/>
<path d="M729.6 613.4 H737.6 M732 613.2 V611.8 H735.2 V613.2 M730.6 614 V621.4 H736.6 V614" fill="none" stroke="#686868" stroke-width="1.1"/>
<rect x="648" y="626" width="14" height="1.6" fill="#5e5e5e"/>
<rect x="765" y="154.6" width="21.4" height="16.2" fill="#323232"/>
<path d="M769.3 97.6 C769.3 92.6 774.3 90.4 778.3 91 C782.9 91.6 784.3 95 782.9 97.4 C781.9 99 779.3 98 778.6999999999999 99.6 C778.3 101 779.9 102 778.3 103 C774.3 104.6 769.3 102 769.3 97.6 Z" fill="#cfcfcf"/>
<circle cx="772.6999999999999" cy="95.2" r="1.2" fill="#535353"/>
<circle cx="776.3" cy="93.4" r="1.2" fill="#535353"/>
<circle cx="780.0999999999999" cy="94.4" r="1.2" fill="#535353"/>
<circle cx="772.9" cy="99.4" r="1.2" fill="#535353"/>
<path d="M773.3 112.4 L777.6999999999999 114.4 V119.6 L773.3 121.8 L768.9 119.6 V114.4 Z" fill="none" stroke="#cfcfcf" stroke-width="1.2"/><path d="M768.9 114.4 L773.3 116.6 L777.6999999999999 114.4 M773.3 116.6 V121.8" fill="none" stroke="#cfcfcf" stroke-width="1"/>
<rect x="779.7" y="112.6" width="3.4" height="3.4" fill="#cfcfcf"/>
<rect x="779.7" y="117.6" width="3.4" height="3.4" fill="#cfcfcf"/>
<rect x="769.3" y="123.6" width="14" height="2.8" fill="#cfcfcf"/>
<defs><linearGradient id="pg" x1="0" x2="1"><stop offset="0" stop-color="#222"/><stop offset="1" stop-color="#e0e0e0"/></linearGradient></defs>
<path d="M769.6999999999999 134.4 C777.3 134.6 782.3 139 782.9 146.8 H769.6999999999999 Z" fill="url(#pg)" stroke="#cfcfcf" stroke-width="1.1"/>
<path d="M776.3 156.6 L783.3 160.6 L776.3 164.6 L769.3 160.6 Z" fill="#f0f0f0"/><path d="M769.3 164.4 L776.3 168.4 L783.3 164.4" fill="none" stroke="#f0f0f0" stroke-width="1.5"/>
<rect x="769.9" y="179" width="11" height="12.6" rx="1" fill="none" stroke="#cfcfcf" stroke-width="1.2"/><rect x="772.6999999999999" y="177.6" width="10.4" height="12.4" fill="#777" stroke="#cfcfcf" stroke-width="1.2"/><path d="M778.6999999999999 177.6 V183.4 L780.6999999999999 182 L782.6999999999999 183.4 V177.6" fill="#e0e0e0"/>
<path d="M775.3 201.4 H769.9 V213 H781.3 V207.6" fill="none" stroke="#cfcfcf" stroke-width="1.5"/><path d="M774.9 208 L782.3 200.6 M777.3 200 H782.9 V205.6" fill="none" stroke="#cfcfcf" stroke-width="1.5"/>
<rect x="761" y="220" width="30" height="1" fill="#3e3e3e"/>
<rect x="768" y="224" width="16" height="1.4" fill="#484848"/>
<rect x="769.3" y="233.4" width="14" height="11.4" fill="#cfcfcf"/>
<rect x="770.9" y="235" width="2.8" height="3.2" fill="#666"/>
<rect x="770.9" y="240" width="2.8" height="3.2" fill="#666"/>
<rect x="774.9" y="235" width="2.8" height="3.2" fill="#666"/>
<rect x="774.9" y="240" width="2.8" height="3.2" fill="#666"/>
<rect x="778.9" y="235" width="2.8" height="3.2" fill="#666"/>
<rect x="778.9" y="240" width="2.8" height="3.2" fill="#666"/>
<path d="M771.6999999999999 259.6 H780.9 L779.9 266.4 H772.6999999999999 Z" fill="#cfcfcf"/><path d="M773.6999999999999 259 C772.3 256 773.3 253.6 774.3 252.4 C775.3 254.6 775.3 257 774.9 259 M776.6999999999999 259 C775.9 256 776.6999999999999 254 777.3 252.8 C778.3 255 778.3 257 777.6999999999999 259 M779.3 259 C779.3 257.4 780.3 256 781.6999999999999 255.4 C781.6999999999999 257 780.9 258.4 780.3 259" fill="#cfcfcf" stroke="#cfcfcf" stroke-width="0.6"/>
<circle cx="776.3" cy="278.4" r="3.3" fill="#cfcfcf"/><circle cx="772.9" cy="283" r="3.3" fill="#cfcfcf"/><circle cx="779.6999999999999" cy="283" r="3.3" fill="#cfcfcf"/><path d="M776.3 282 L778.9 289 H773.6999999999999 Z" fill="#cfcfcf"/>
<rect x="761" y="296" width="30" height="1" fill="#3e3e3e"/>
<rect x="768" y="300" width="16" height="1.4" fill="#484848"/>
<rect x="769.3" y="309" width="14" height="1.4" fill="#cfcfcf"/>
<rect x="769.3" y="313" width="14" height="2.2" fill="#cfcfcf"/>
<rect x="769.3" y="317.6" width="14" height="3" fill="#cfcfcf"/>
<rect x="769.3" y="330.4" width="14" height="10.4" fill="url(#pg)" stroke="#cfcfcf" stroke-width="1.1"/>
<circle cx="774.6999999999999" cy="355.6" r="4.8" fill="#d0d0d0"/><circle cx="777.9" cy="358.6" r="4.8" fill="#9a9a9a" stroke="#c0c0c0" stroke-width="0.8" opacity="0.9"/>
<rect x="761" y="371" width="30" height="1" fill="#3e3e3e"/>
<rect x="768" y="375" width="16" height="1.4" fill="#484848"/>
<circle cx="776.3" cy="389" r="4.6" fill="#e0e0e0"/><circle cx="776.3" cy="389" r="6.4" fill="none" stroke="#cfcfcf" stroke-width="1" stroke-dasharray="1 1.3"/>
<path d="M773.3 405.4 H782.6999999999999 V415 H775.3" fill="none" stroke="#cfcfcf" stroke-width="1.2"/><rect x="769.6999999999999" y="409.6" width="6.6" height="6.6" rx="1" fill="#cfcfcf"/><circle cx="773.0" cy="412.9" r="1.6" fill="#535353"/>
<rect x="761" y="424" width="30" height="1" fill="#3e3e3e"/>
</g>
</svg>
</div></body></html>
